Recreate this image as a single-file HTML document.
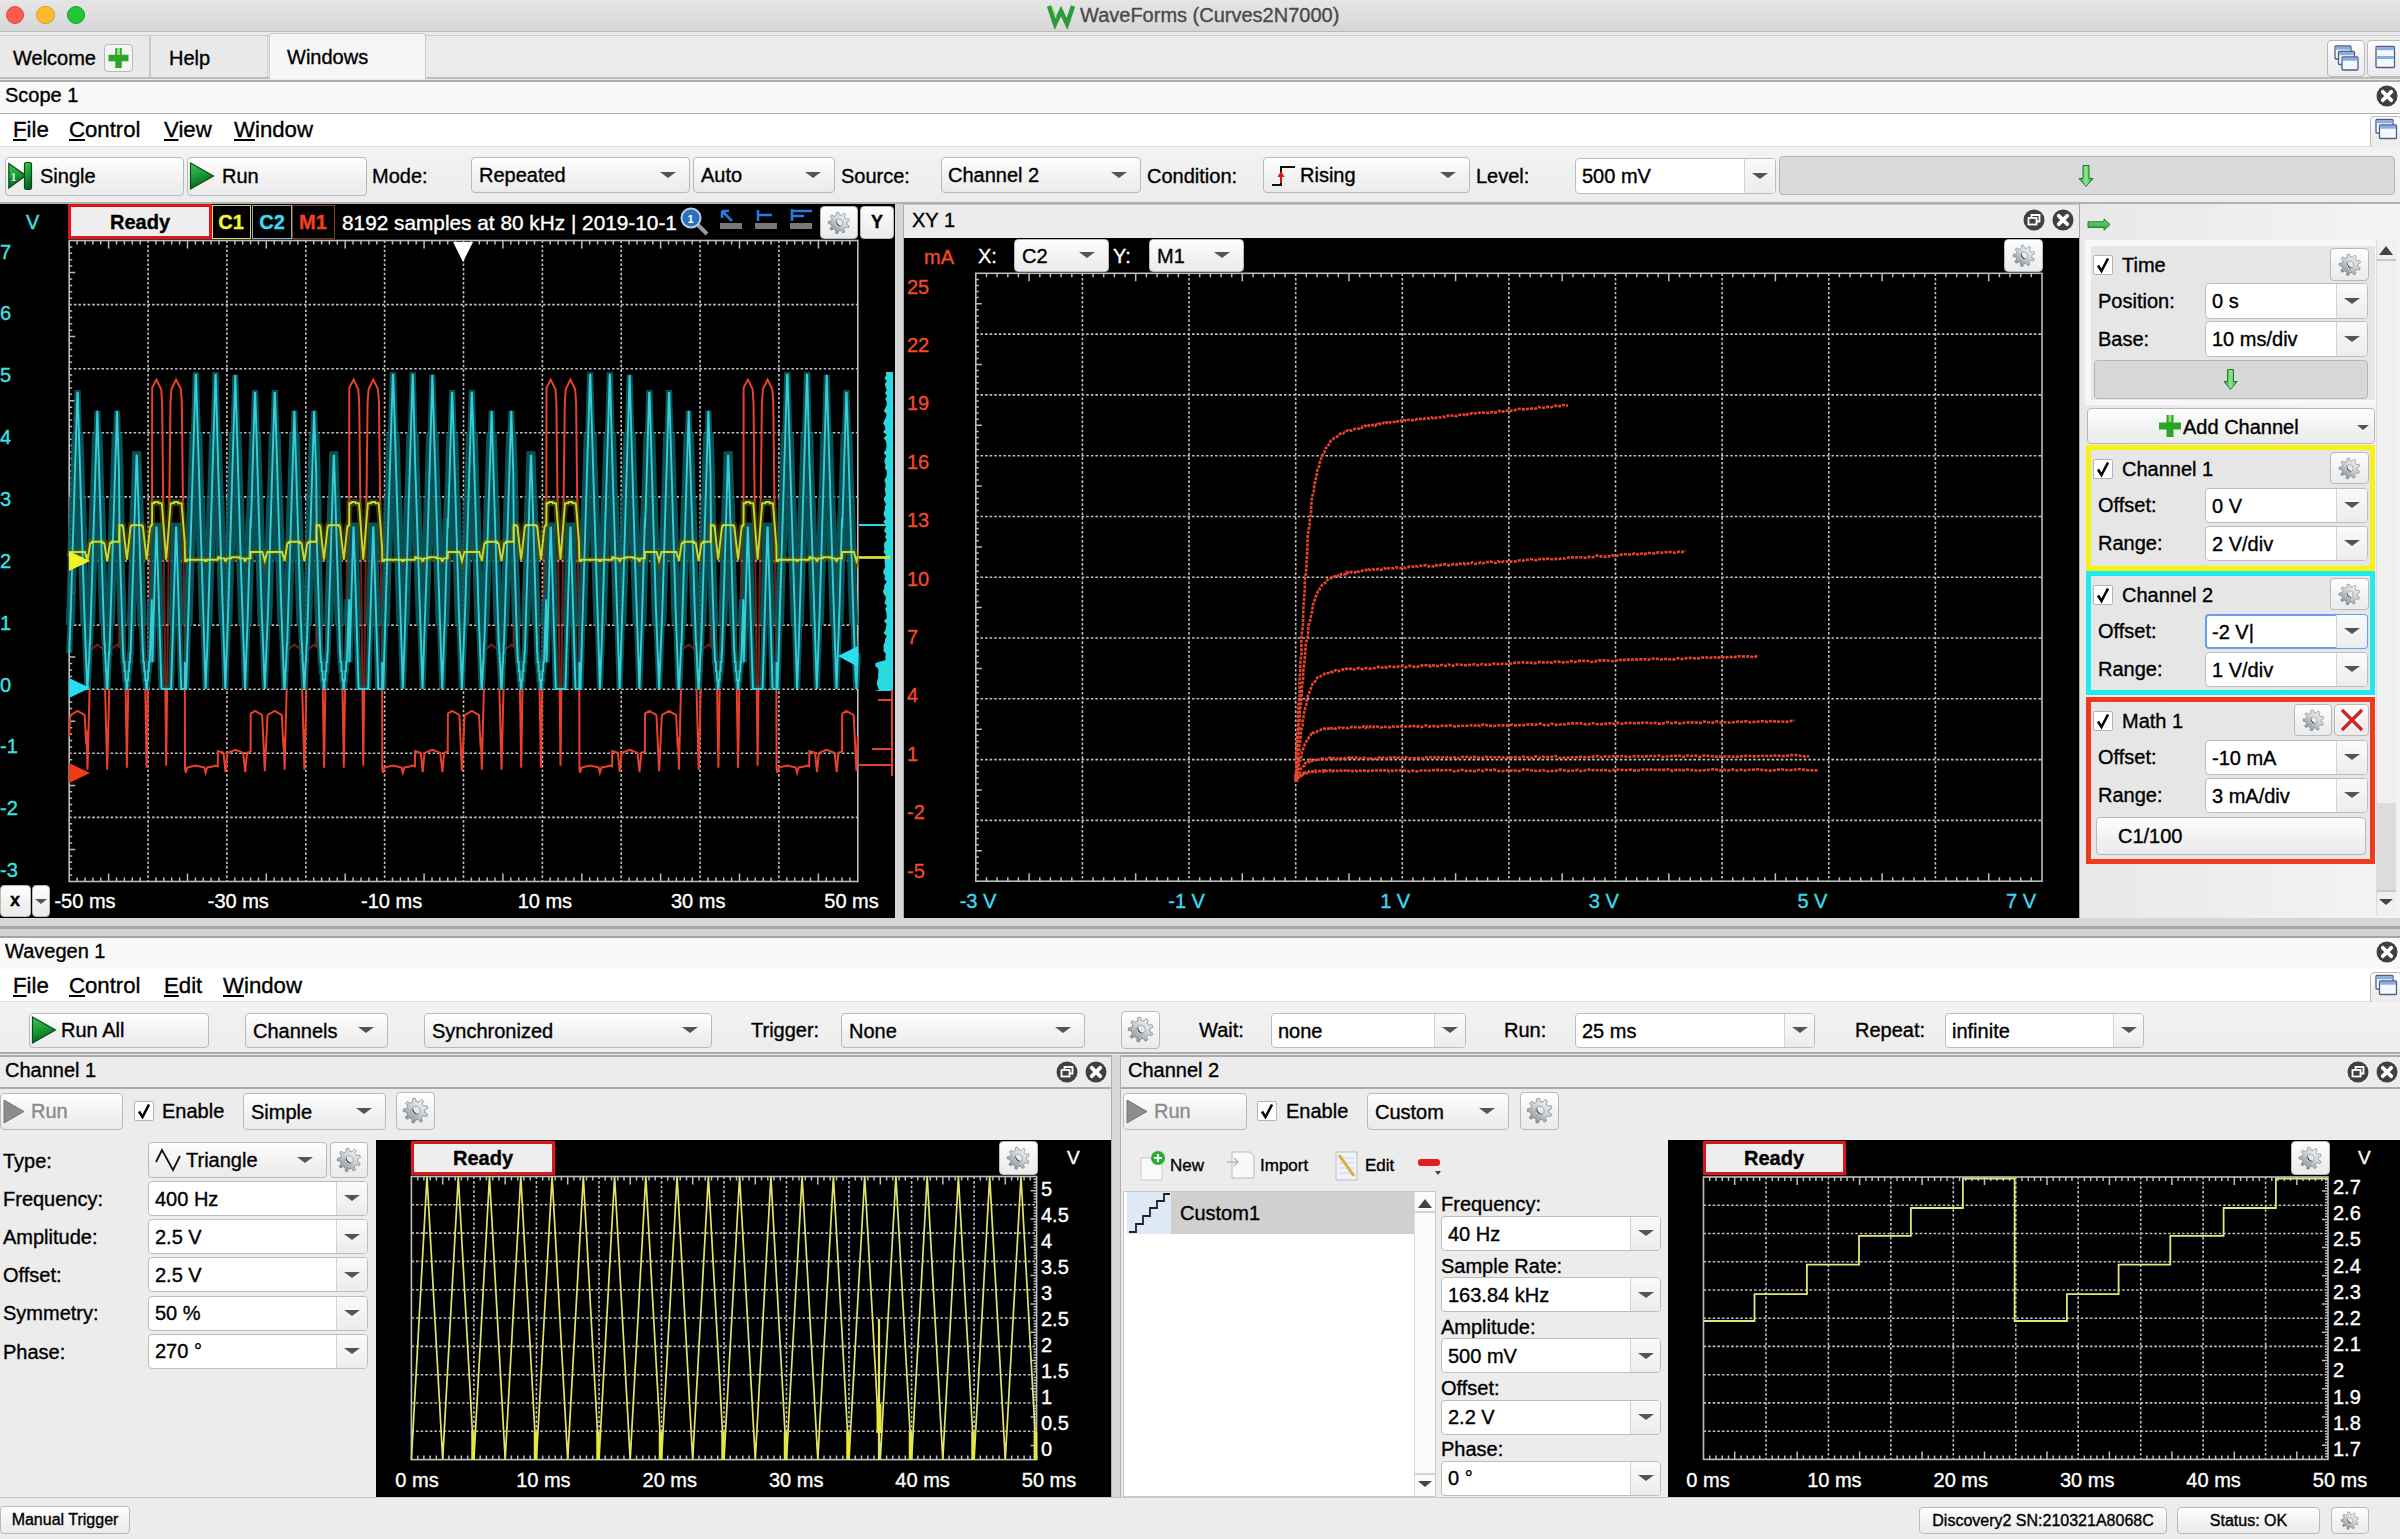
<!DOCTYPE html><html><head><meta charset="utf-8"><style>
*{margin:0;padding:0;box-sizing:border-box}
html,body{width:2400px;height:1539px;overflow:hidden;background:#ececec;font-family:"Liberation Sans", sans-serif}
div,svg{position:absolute}
.t{white-space:nowrap;-webkit-text-stroke:0.35px currentColor}
.btn{background:linear-gradient(#fefefe,#f1f1f1 60%,#ebebeb);border:1.5px solid #b9b9b9;border-radius:4px}
.edit{background:#fff;border:1.5px solid #bdbdbd;border-radius:4px}
.edit.focus{border:2px solid #6a9ee6}
.editbtn{background:linear-gradient(#fafafa,#ececec);border-left:1px solid #d4d4d4;border-radius:0 3px 3px 0}
.ar{width:0;height:0}
.chk{background:#fff;border:1.5px solid #b5b5b5;border-radius:2px}
.ic{overflow:visible}
</style></head><body><svg style="position:absolute;width:0;height:0"><defs><linearGradient id="gg" x1="0.8" y1="0.1" x2="0.2" y2="0.9"><stop offset="0" stop-color="#f2f5f7"/><stop offset="0.5" stop-color="#c9ced2"/><stop offset="1" stop-color="#8a9196"/></linearGradient><symbol id="gear" viewBox="0 0 32 32"><path d="M26.58 18.15 L29.92 20.06 L28.77 22.87 L25.05 21.89 L22.73 24.45 L24.05 28.06 L21.37 29.47 L19.15 26.33 L15.72 26.80 L14.42 30.41 L11.46 29.77 L11.77 25.94 L8.85 24.09 L5.52 26.03 L3.67 23.63 L6.37 20.89 L5.32 17.60 L1.53 16.95 L1.65 13.92 L5.48 13.56 L6.79 10.36 L4.31 7.42 L6.35 5.18 L9.51 7.37 L12.57 5.76 L12.56 1.91 L15.56 1.51 L16.58 5.22 L19.95 5.95 L22.42 3.00 L24.98 4.61 L23.37 8.11 L25.49 10.84 L29.27 10.16 L30.20 13.05 L26.72 14.69Z" fill="url(#gg)" stroke="#7a8085" stroke-width="0.9"/><circle cx="16" cy="16" r="5.2" fill="#e6eaec" stroke="#8a9094" stroke-width="0.8"/><path d="M13.2 12.2 A5 5 0 0 0 19.5 19.6 A6.2 6.2 0 0 1 13.2 12.2Z" fill="#2e3a42"/></symbol></defs></svg><div class="" style="left:0px;top:0px;width:2400px;height:32px;background:linear-gradient(#e6e6e6,#d6d6d6);border-bottom:1px solid #b8b8b8"></div>
<div style="left:5.7px;top:5.7px;width:18.6px;height:18.6px;border-radius:50%;background:#fe5a52;border:1px solid #d94a43"></div>
<div style="left:36.3px;top:5.7px;width:18.6px;height:18.6px;border-radius:50%;background:#fdbb2d;border:1px solid #d9a02a"></div>
<div style="left:66.9px;top:5.7px;width:18.6px;height:18.6px;border-radius:50%;background:#20c934;border:1px solid #189a28"></div>
<div class="t" style="left:1080px;top:3.0px;font-size:20px;line-height:24.0px;color:#4a4a4a;font-weight:normal;">WaveForms (Curves2N7000)</div>
<svg class="ic" style="left:1048px;top:4px" width="26" height="22" viewBox="0 0 26 22"><path d="M1 2 L7 20 L13 7 L19 20 L25 2" fill="none" stroke="#2e9a3c" stroke-width="4.5" stroke-linejoin="miter"/><path d="M4 2 L8 14" stroke="#9fe07a" stroke-width="1.5"/></svg>
<div class="" style="left:0px;top:32px;width:2400px;height:49px;background:#ebebeb"></div>
<div class="" style="left:0px;top:35px;width:2400px;height:1px;background:#c9c9c9"></div>
<div class="" style="left:0px;top:77px;width:2400px;height:2px;background:#bdbdbd"></div>
<div class="" style="left:0px;top:36px;width:151px;height:41px;background:#e9e9e9;border-right:2px solid #c8c8c8"></div>
<div class="t" style="left:13px;top:46.0px;font-size:20px;line-height:24.0px;color:#000;font-weight:normal;">Welcome</div>
<div class="" style="left:104px;top:44px;width:29px;height:28px;background:#f4f4f4;border:1.5px solid #b8b8b8;border-radius:4px"></div>
<svg class="ic" style="left:107px;top:46px" width="23" height="24" viewBox="0 0 23 24"><path d="M11.5 2 V22 M1.5 12 H21.5" stroke="#2aa52a" stroke-width="6.5"/><path d="M11.5 2 V9" stroke="#8fe07f" stroke-width="3"/></svg>
<div class="" style="left:153px;top:36px;width:115px;height:41px;background:#e9e9e9;border-right:1.5px solid #cfcfcf"></div>
<div class="t" style="left:169px;top:46.0px;font-size:20px;line-height:24.0px;color:#000;font-weight:normal;">Help</div>
<div class="" style="left:269px;top:33px;width:157px;height:46px;background:#f6f6f6;border:1.5px solid #cacaca;border-bottom:none;border-radius:3px 3px 0 0"></div>
<div class="t" style="left:287px;top:45.0px;font-size:20px;line-height:24.0px;color:#000;font-weight:normal;">Windows</div>
<div class="btn" style="left:2327px;top:40px;width:38px;height:37px;"></div>
<svg class="ic" style="left:0;top:0" width="2400" height="74" viewBox="0 0 2400 74"><rect x="2335.0" y="46.0" width="16.0" height="13.0" rx="1" fill="#f2f8ff" stroke="#4f5f7c" stroke-width="1.3"/><rect x="2335.7" y="46.7" width="14.6" height="3" fill="#86ade6"/><rect x="2338.5" y="51.5" width="16.0" height="13.0" rx="1" fill="#f2f8ff" stroke="#4f5f7c" stroke-width="1.3"/><rect x="2339.2" y="52.2" width="14.6" height="3" fill="#86ade6"/><rect x="2342.0" y="57.0" width="16.0" height="13.0" rx="1" fill="#f2f8ff" stroke="#4f5f7c" stroke-width="1.3"/><rect x="2342.7" y="57.7" width="14.6" height="3" fill="#86ade6"/></svg>
<div class="btn" style="left:2367px;top:40px;width:36px;height:37px;"></div>
<svg class="ic" style="left:0;top:0" width="2400" height="80" viewBox="0 0 2400 80"><rect x="2376" y="46.5" width="18.5" height="21" rx="1" fill="#f2f8ff" stroke="#4f5f7c" stroke-width="1.3"/><rect x="2376.7" y="47.2" width="17.1" height="3" fill="#86ade6"/><rect x="2376.7" y="56" width="17.1" height="3" fill="#86ade6"/></svg>
<div class="" style="left:0px;top:80px;width:2400px;height:34px;background:#f9f9f9;border-top:2px solid #acacac;border-bottom:1.5px solid #b0b0b0"></div>
<div class="t" style="left:5px;top:83.0px;font-size:20px;line-height:24.0px;color:#000;font-weight:normal;">Scope 1</div>
<svg class="ic" style="left:2376px;top:85px" width="22" height="22" viewBox="0 0 22 22"><circle cx="11" cy="11" r="10.5" fill="#404040"/><path d="M6.8 6.8 L15.2 15.2 M15.2 6.8 L6.8 15.2" stroke="#fff" stroke-width="3.8" stroke-linecap="round"/></svg>
<div class="" style="left:0px;top:114px;width:2400px;height:33px;background:#fff;border-bottom:1px solid #dedede"></div>
<div class="t" style="left:13px;top:116.7px;font-size:22.2px;line-height:26.6px;color:#000;font-weight:normal;"><u>F</u>ile</div>
<div class="t" style="left:69px;top:116.7px;font-size:22.2px;line-height:26.6px;color:#000;font-weight:normal;"><u>C</u>ontrol</div>
<div class="t" style="left:164px;top:116.7px;font-size:22.2px;line-height:26.6px;color:#000;font-weight:normal;"><u>V</u>iew</div>
<div class="t" style="left:234px;top:116.7px;font-size:22.2px;line-height:26.6px;color:#000;font-weight:normal;"><u>W</u>indow</div>
<div class="btn" style="left:2370px;top:116px;width:32px;height:33px;"></div>
<svg class="ic" style="left:0;top:0" width="2400" height="142" viewBox="0 0 2400 142"><rect x="2376.0" y="119.5" width="17.0" height="13.5" rx="1" fill="#f2f8ff" stroke="#4f5f7c" stroke-width="1.3"/><rect x="2376.7" y="120.2" width="15.6" height="3" fill="#86ade6"/><rect x="2379.5" y="125.0" width="17.0" height="13.5" rx="1" fill="#f2f8ff" stroke="#4f5f7c" stroke-width="1.3"/><rect x="2380.2" y="125.7" width="15.6" height="3" fill="#86ade6"/></svg>
<div class="" style="left:0px;top:147px;width:2400px;height:57px;background:linear-gradient(#f3f3f3,#ececec);border-bottom:2px solid #b0b0b0"></div>
<div class="btn" style="left:5px;top:157px;width:179px;height:39px;"></div>
<svg class="ic" style="left:8px;top:161px" width="26" height="30" viewBox="0 0 26 30"><defs><linearGradient id="grn" x1="0" y1="0" x2="0.3" y2="1"><stop offset="0" stop-color="#3cc85a"/><stop offset="0.55" stop-color="#1a9a36"/><stop offset="1" stop-color="#0c5e20"/></linearGradient></defs><path d="M0.8 2.5 L18 14.5 L0.8 27 Z" fill="url(#grn)" stroke="#0a4a18" stroke-width="1.2"/><rect x="16.5" y="1.5" width="7" height="27" rx="1.8" fill="url(#grn)" stroke="#0a4a18" stroke-width="1.2"/><text x="2.5" y="20" font-size="12" font-weight="bold" fill="#d8f0d8" font-family="Liberation Serif">1</text></svg>
<div class="t" style="left:40px;top:164.0px;font-size:20px;line-height:24.0px;color:#000;font-weight:normal;">Single</div>
<div class="btn" style="left:187px;top:157px;width:180px;height:39px;"></div>
<svg class="ic" style="left:189px;top:162px" width="27" height="28" viewBox="0 0 27 28"><path d="M1.5 1 L24.5 14 L1.5 27 Z" fill="url(#grn)" stroke="#0a4a18" stroke-width="1.2"/></svg>
<div class="t" style="left:222px;top:164.0px;font-size:20px;line-height:24.0px;color:#000;font-weight:normal;">Run</div>
<div class="t" style="left:372px;top:164.0px;font-size:20px;line-height:24.0px;color:#000;font-weight:normal;">Mode:</div>
<div class="btn" style="left:471px;top:157px;width:219px;height:36px;"></div>
<div class="t" style="left:479px;top:163.0px;font-size:20px;line-height:24.0px;color:#000;font-weight:normal;">Repeated</div>
<div class="ar" style="left:660px;top:171.8px;border-left:8px solid transparent;border-right:8px solid transparent;border-top:6.8px solid #555"></div>
<div class="btn" style="left:693px;top:157px;width:142px;height:36px;"></div>
<div class="t" style="left:701px;top:163.0px;font-size:20px;line-height:24.0px;color:#000;font-weight:normal;">Auto</div>
<div class="ar" style="left:805px;top:171.8px;border-left:8px solid transparent;border-right:8px solid transparent;border-top:6.8px solid #555"></div>
<div class="t" style="left:841px;top:164.0px;font-size:20px;line-height:24.0px;color:#000;font-weight:normal;">Source:</div>
<div class="btn" style="left:941px;top:157px;width:200px;height:36px;"></div>
<div class="t" style="left:948px;top:163.0px;font-size:20px;line-height:24.0px;color:#000;font-weight:normal;">Channel 2</div>
<div class="ar" style="left:1111px;top:171.8px;border-left:8px solid transparent;border-right:8px solid transparent;border-top:6.8px solid #555"></div>
<div class="t" style="left:1147px;top:164.0px;font-size:20px;line-height:24.0px;color:#000;font-weight:normal;">Condition:</div>
<div class="btn" style="left:1263px;top:157px;width:207px;height:36px;"></div>
<div class="t" style="left:1300px;top:163.0px;font-size:20px;line-height:24.0px;color:#000;font-weight:normal;">Rising</div>
<div class="ar" style="left:1440px;top:171.8px;border-left:8px solid transparent;border-right:8px solid transparent;border-top:6.8px solid #555"></div>
<svg class="ic" style="left:1271px;top:163px" width="26" height="26" viewBox="0 0 26 26"><path d="M1 22 H10 V4 H24" fill="none" stroke="#111" stroke-width="2"/><path d="M10 8 L6.5 14 H13.5 Z" fill="#e01010"/><path d="M10 12 V20" stroke="#e01010" stroke-width="2"/></svg>
<div class="t" style="left:1476px;top:164.0px;font-size:20px;line-height:24.0px;color:#000;font-weight:normal;">Level:</div>
<div class="edit" style="left:1575px;top:158px;width:201px;height:36px;"></div>
<div class="editbtn" style="left:1744px;top:159px;width:31px;height:34px;"></div>
<div class="t" style="left:1582px;top:164.0px;font-size:20px;line-height:24.0px;color:#000;font-weight:normal;">500 mV</div>
<div class="ar" style="left:1752.0px;top:172.8px;border-left:8px solid transparent;border-right:8px solid transparent;border-top:6.8px solid #555"></div>
<div class="" style="left:1779px;top:156px;width:616px;height:39px;background:#dadada;border:1.5px solid #b4b4b4;border-radius:4px"></div>
<svg class="ic" style="left:0;top:0" width="2400" height="240" viewBox="0 0 2400 240"><path d="M2083 165.5 H2089 V178.5 H2093 L2086 186.5 L2079 178.5 H2083 Z" fill="url(#gar2)" stroke="#1c7a2a" stroke-width="1"/><defs><linearGradient id="gar2" x1="0" y1="0" x2="1" y2="0"><stop offset="0" stop-color="#2a9a3a"/><stop offset="0.5" stop-color="#8fe88f"/><stop offset="1" stop-color="#2a9a3a"/></linearGradient></defs></svg>
<div class="" style="left:0px;top:204px;width:895px;height:714px;background:#000"></div>
<div class="t" style="left:26px;top:210.0px;font-size:20px;line-height:24.0px;color:#3fe0e0;font-weight:normal;">V</div>
<div class="" style="left:68px;top:204px;width:144px;height:35px;background:#eeeeee;border:3px solid #e0141a"></div>
<div class="t" style="left:-60.0px;width:400px;text-align:center;top:210.0px;font-size:20px;line-height:24.0px;color:#000;font-weight:bold">Ready</div>
<div class="" style="left:212px;top:205px;width:39px;height:34px;background:#000;border:1px solid #d8d870"></div>
<div class="t" style="left:31.0px;width:400px;text-align:center;top:210.0px;font-size:20px;line-height:24.0px;color:#f4f43a;font-weight:bold">C1</div>
<div class="" style="left:252px;top:205px;width:40px;height:34px;background:#000;border:1px solid #9ab"></div>
<div class="t" style="left:72.0px;width:400px;text-align:center;top:210.0px;font-size:20px;line-height:24.0px;color:#40d8f0;font-weight:bold">C2</div>
<div class="" style="left:292px;top:205px;width:43px;height:34px;background:#000;border:1px solid #7a3a2a"></div>
<div class="t" style="left:113.0px;width:400px;text-align:center;top:210.0px;font-size:20px;line-height:24.0px;color:#f04020;font-weight:bold">M1</div>
<div class="t" style="left:342px;top:209.5px;font-size:20.8px;line-height:25.0px;color:#fff;font-weight:normal;">8192 samples at 80 kHz | 2019-10-1</div>
<svg class="ic" style="left:680px;top:207px" width="30" height="30" viewBox="0 0 30 30"><path d="M17 17 L27 27" stroke="#999" stroke-width="4"/><circle cx="11" cy="11" r="9.5" fill="#2a6fc0" stroke="#bcd" stroke-width="2"/><text x="7.5" y="15.5" font-size="11" font-weight="bold" fill="#fff" font-family="Liberation Sans">1</text></svg>
<svg class="ic" style="left:720px;top:209px" width="24" height="22" viewBox="0 0 24 22"><rect x="0" y="14" width="22" height="6" fill="#777"/><path d="M2 2 L12 12 M2 2 L2 9 M2 2 L9 2" stroke="#2a7ae0" stroke-width="2.5"/></svg>
<svg class="ic" style="left:755px;top:209px" width="24" height="22" viewBox="0 0 24 22"><rect x="0" y="14" width="22" height="6" fill="#777"/><path d="M3 1 V12 M3 6 H17" stroke="#2a7ae0" stroke-width="2.5"/></svg>
<svg class="ic" style="left:790px;top:209px" width="24" height="22" viewBox="0 0 24 22"><rect x="0" y="14" width="22" height="6" fill="#777"/><path d="M2 0 V12 M2 2 H22 M2 7 H14" stroke="#2a7ae0" stroke-width="2.5"/></svg>
<div class="btn" style="left:820px;top:206px;width:38px;height:33px;"></div>
<svg class="ic" style="left:827.1px;top:210.6px" width="23.8" height="23.8" viewBox="0 0 32 32"><use href="#gear"/></svg>
<div class="btn" style="left:860px;top:206px;width:34px;height:33px;"></div>
<div class="t" style="left:677.0px;width:400px;text-align:center;top:212.2px;font-size:18px;line-height:21.6px;color:#000;font-weight:bold">Y</div>
<svg style="left:0;top:0" width="900" height="920" viewBox="0 0 900 920"><path d="M148.1 240.5V881.5M226.9 240.5V881.5M305.8 240.5V881.5M384.6 240.5V881.5M463.5 240.5V881.5M542.4 240.5V881.5M621.2 240.5V881.5M700.1 240.5V881.5M778.9 240.5V881.5M69.2 304.6H857.8M69.2 368.7H857.8M69.2 432.8H857.8M69.2 496.9H857.8M69.2 561.0H857.8M69.2 625.1H857.8M69.2 689.2H857.8M69.2 753.3H857.8M69.2 817.4H857.8" stroke="#bdbdbd" stroke-width="1.6" stroke-dasharray="2.6 2"/><rect x="69.2" y="240.5" width="788.6" height="641.0" fill="none" stroke="#bdbdbd" stroke-width="1.6"/><path d="M77.1 240.5v4M77.1 881.5v-4M85.0 240.5v4M85.0 881.5v-4M92.9 240.5v4M92.9 881.5v-4M100.7 240.5v4M100.7 881.5v-4M108.6 240.5v8M108.6 881.5v-8M116.5 240.5v4M116.5 881.5v-4M124.4 240.5v4M124.4 881.5v-4M132.3 240.5v4M132.3 881.5v-4M140.2 240.5v4M140.2 881.5v-4M155.9 240.5v4M155.9 881.5v-4M163.8 240.5v4M163.8 881.5v-4M171.7 240.5v4M171.7 881.5v-4M179.6 240.5v4M179.6 881.5v-4M187.5 240.5v8M187.5 881.5v-8M195.4 240.5v4M195.4 881.5v-4M203.3 240.5v4M203.3 881.5v-4M211.1 240.5v4M211.1 881.5v-4M219.0 240.5v4M219.0 881.5v-4M234.8 240.5v4M234.8 881.5v-4M242.7 240.5v4M242.7 881.5v-4M250.6 240.5v4M250.6 881.5v-4M258.5 240.5v4M258.5 881.5v-4M266.3 240.5v8M266.3 881.5v-8M274.2 240.5v4M274.2 881.5v-4M282.1 240.5v4M282.1 881.5v-4M290.0 240.5v4M290.0 881.5v-4M297.9 240.5v4M297.9 881.5v-4M313.7 240.5v4M313.7 881.5v-4M321.6 240.5v4M321.6 881.5v-4M329.4 240.5v4M329.4 881.5v-4M337.3 240.5v4M337.3 881.5v-4M345.2 240.5v8M345.2 881.5v-8M353.1 240.5v4M353.1 881.5v-4M361.0 240.5v4M361.0 881.5v-4M368.9 240.5v4M368.9 881.5v-4M376.8 240.5v4M376.8 881.5v-4M392.5 240.5v4M392.5 881.5v-4M400.4 240.5v4M400.4 881.5v-4M408.3 240.5v4M408.3 881.5v-4M416.2 240.5v4M416.2 881.5v-4M424.1 240.5v8M424.1 881.5v-8M432.0 240.5v4M432.0 881.5v-4M439.8 240.5v4M439.8 881.5v-4M447.7 240.5v4M447.7 881.5v-4M455.6 240.5v4M455.6 881.5v-4M471.4 240.5v4M471.4 881.5v-4M479.3 240.5v4M479.3 881.5v-4M487.2 240.5v4M487.2 881.5v-4M495.0 240.5v4M495.0 881.5v-4M502.9 240.5v8M502.9 881.5v-8M510.8 240.5v4M510.8 881.5v-4M518.7 240.5v4M518.7 881.5v-4M526.6 240.5v4M526.6 881.5v-4M534.5 240.5v4M534.5 881.5v-4M550.2 240.5v4M550.2 881.5v-4M558.1 240.5v4M558.1 881.5v-4M566.0 240.5v4M566.0 881.5v-4M573.9 240.5v4M573.9 881.5v-4M581.8 240.5v8M581.8 881.5v-8M589.7 240.5v4M589.7 881.5v-4M597.6 240.5v4M597.6 881.5v-4M605.4 240.5v4M605.4 881.5v-4M613.3 240.5v4M613.3 881.5v-4M629.1 240.5v4M629.1 881.5v-4M637.0 240.5v4M637.0 881.5v-4M644.9 240.5v4M644.9 881.5v-4M652.8 240.5v4M652.8 881.5v-4M660.6 240.5v8M660.6 881.5v-8M668.5 240.5v4M668.5 881.5v-4M676.4 240.5v4M676.4 881.5v-4M684.3 240.5v4M684.3 881.5v-4M692.2 240.5v4M692.2 881.5v-4M708.0 240.5v4M708.0 881.5v-4M715.9 240.5v4M715.9 881.5v-4M723.7 240.5v4M723.7 881.5v-4M731.6 240.5v4M731.6 881.5v-4M739.5 240.5v8M739.5 881.5v-8M747.4 240.5v4M747.4 881.5v-4M755.3 240.5v4M755.3 881.5v-4M763.2 240.5v4M763.2 881.5v-4M771.1 240.5v4M771.1 881.5v-4M786.8 240.5v4M786.8 881.5v-4M794.7 240.5v4M794.7 881.5v-4M802.6 240.5v4M802.6 881.5v-4M810.5 240.5v4M810.5 881.5v-4M818.4 240.5v8M818.4 881.5v-8M826.3 240.5v4M826.3 881.5v-4M834.1 240.5v4M834.1 881.5v-4M842.0 240.5v4M842.0 881.5v-4M849.9 240.5v4M849.9 881.5v-4M69.2 246.9h3M69.2 253.3h3M69.2 259.7h3M69.2 266.1h3M69.2 272.6h6M69.2 279.0h3M69.2 285.4h3M69.2 291.8h3M69.2 298.2h3M69.2 311.0h3M69.2 317.4h3M69.2 323.8h3M69.2 330.2h3M69.2 336.6h6M69.2 343.1h3M69.2 349.5h3M69.2 355.9h3M69.2 362.3h3M69.2 375.1h3M69.2 381.5h3M69.2 387.9h3M69.2 394.3h3M69.2 400.8h6M69.2 407.2h3M69.2 413.6h3M69.2 420.0h3M69.2 426.4h3M69.2 439.2h3M69.2 445.6h3M69.2 452.0h3M69.2 458.4h3M69.2 464.9h6M69.2 471.3h3M69.2 477.7h3M69.2 484.1h3M69.2 490.5h3M69.2 503.3h3M69.2 509.7h3M69.2 516.1h3M69.2 522.5h3M69.2 529.0h6M69.2 535.4h3M69.2 541.8h3M69.2 548.2h3M69.2 554.6h3M69.2 567.4h3M69.2 573.8h3M69.2 580.2h3M69.2 586.6h3M69.2 593.0h6M69.2 599.5h3M69.2 605.9h3M69.2 612.3h3M69.2 618.7h3M69.2 631.5h3M69.2 637.9h3M69.2 644.3h3M69.2 650.7h3M69.2 657.1h6M69.2 663.6h3M69.2 670.0h3M69.2 676.4h3M69.2 682.8h3M69.2 695.6h3M69.2 702.0h3M69.2 708.4h3M69.2 714.8h3M69.2 721.2h6M69.2 727.7h3M69.2 734.1h3M69.2 740.5h3M69.2 746.9h3M69.2 759.7h3M69.2 766.1h3M69.2 772.5h3M69.2 778.9h3M69.2 785.4h6M69.2 791.8h3M69.2 798.2h3M69.2 804.6h3M69.2 811.0h3M69.2 823.8h3M69.2 830.2h3M69.2 836.6h3M69.2 843.0h3M69.2 849.5h6M69.2 855.9h3M69.2 862.3h3M69.2 868.7h3M69.2 875.1h3" stroke="#bdbdbd" stroke-width="1.5"/><defs><clipPath id="cb0"><rect x="0" y="624.9" width="900" height="64.1"/></clipPath><clipPath id="cb1"><rect x="0" y="560.8" width="900" height="64.1"/></clipPath><clipPath id="cb2"><rect x="0" y="496.7" width="900" height="64.1"/></clipPath><clipPath id="cb3"><rect x="0" y="432.6" width="900" height="64.1"/></clipPath><clipPath id="cb4"><rect x="0" y="112.1" width="900" height="320.5"/></clipPath><path id="cyp" d="M69.2 653.1 L70.9 608.2 L76.8 410.8 L77.4 392.9 L77.7 392.9 L84.2 608.2 L87.2 689.0 L87.7 689.0 L87.8 680.0 L88.1 680.0 L88.8 662.1 L89.1 662.1 L89.7 644.1 L90.0 644.1 L97.3 410.8 L103.3 608.2 L104.5 644.1 L104.8 644.1 L105.0 653.1 L105.3 653.1 L105.5 662.1 L105.8 662.1 L105.9 671.1 L106.3 671.1 L106.9 689.0 L107.4 689.0 L108.9 653.1 L109.3 653.1 L109.4 644.1 L109.7 644.1 L117.0 410.8 L119.0 473.6 L119.5 536.4 L122.8 644.1 L123.6 662.1 L124.4 662.1 L124.6 671.1 L125.3 671.1 L125.5 680.0 L126.3 680.0 L126.5 689.0 L127.2 689.0 L127.4 680.0 L128.2 680.0 L128.3 671.1 L129.1 671.1 L129.3 662.1 L130.1 662.1 L130.2 653.1 L130.6 653.1 L136.5 455.7 L136.9 455.7 L137.5 473.6 L142.9 653.1 L143.2 653.1 L143.3 662.1 L144.1 662.1 L144.3 671.1 L145.1 671.1 L145.2 680.0 L146.0 680.0 L146.2 689.0 L147.0 689.0 L147.1 680.0 L147.9 680.0 L148.1 671.1 L148.8 671.1 L149.0 662.1 L149.8 662.1 L151.8 599.3 L152.3 662.1 L156.3 527.5 L156.6 527.5 L161.5 689.0 L171.1 689.0 L176.0 527.5 L176.3 527.5 L181.2 689.0 L184.8 689.0 L185.0 662.1 L186.1 689.0 L195.7 374.9 L196.0 374.9 L205.6 689.0 L207.4 644.1 L215.4 374.9 L215.7 374.9 L218.1 464.6 L225.3 689.0 L228.0 617.2 L235.3 374.9 L241.1 572.3 L245.1 689.0 L247.7 617.2 L250.6 518.5 L250.7 527.5 L251.7 500.5 L254.8 392.9 L255.2 392.9 L255.8 410.8 L261.6 608.2 L264.8 689.0 L268.1 608.2 L274.6 392.9 L274.9 392.9 L275.5 410.8 L281.3 608.2 L284.3 689.0 L284.8 689.0 L285.0 680.0 L285.3 680.0 L285.4 671.1 L285.7 671.1 L286.9 644.1 L287.2 644.1 L294.4 410.8 L300.4 608.2 L301.7 644.1 L302.0 644.1 L302.2 653.1 L302.5 653.1 L302.6 662.1 L302.9 662.1 L304.0 689.0 L304.5 689.0 L305.6 662.1 L305.9 662.1 L306.6 644.1 L306.9 644.1 L314.1 410.8 L316.2 473.6 L316.7 536.4 L320.0 644.1 L320.8 662.1 L321.6 662.1 L321.7 671.1 L322.5 671.1 L322.7 680.0 L323.4 680.0 L323.6 689.0 L324.4 689.0 L324.5 680.0 L325.3 680.0 L325.5 671.1 L326.3 671.1 L326.4 662.1 L327.2 662.1 L327.4 653.1 L327.7 653.1 L333.7 455.7 L334.0 455.7 L334.6 473.6 L340.0 653.1 L340.3 653.1 L340.5 662.1 L341.3 662.1 L341.4 671.1 L342.2 671.1 L342.4 680.0 L343.2 680.0 L343.3 689.0 L344.1 689.0 L344.3 680.0 L345.1 680.0 L345.2 671.1 L346.0 671.1 L346.2 662.1 L346.9 662.1 L349.0 599.3 L349.5 662.1 L353.4 527.5 L353.7 527.5 L358.6 689.0 L368.2 689.0 L373.1 527.5 L373.4 527.5 L378.3 689.0 L382.1 689.0 L382.3 662.1 L383.2 689.0 L392.8 374.9 L393.2 374.9 L402.8 689.0 L404.5 644.1 L412.6 374.9 L412.9 374.9 L415.2 464.6 L422.5 689.0 L426.6 572.3 L432.4 374.9 L438.3 572.3 L442.2 689.0 L444.9 617.2 L447.7 518.5 L447.9 527.5 L448.8 500.5 L452.0 392.9 L452.3 392.9 L452.9 410.8 L458.8 608.2 L461.9 689.0 L465.2 608.2 L471.7 392.9 L472.0 392.9 L472.6 410.8 L478.5 608.2 L481.5 689.0 L482.0 689.0 L482.1 680.0 L482.4 680.0 L483.1 662.1 L483.4 662.1 L484.0 644.1 L484.3 644.1 L491.6 410.8 L497.6 608.2 L498.8 644.1 L499.1 644.1 L499.3 653.1 L499.6 653.1 L499.8 662.1 L500.1 662.1 L501.2 689.0 L501.7 689.0 L502.8 662.1 L503.1 662.1 L503.2 653.1 L503.6 653.1 L503.7 644.1 L504.0 644.1 L511.3 410.8 L513.3 473.6 L513.8 536.4 L517.1 644.1 L517.9 662.1 L518.7 662.1 L518.9 671.1 L519.6 671.1 L519.8 680.0 L520.6 680.0 L520.8 689.0 L521.5 689.0 L521.7 680.0 L522.5 680.0 L522.6 671.1 L523.4 671.1 L523.6 662.1 L524.4 662.1 L524.5 653.1 L524.9 653.1 L530.8 455.7 L531.2 455.7 L531.8 473.6 L537.2 653.1 L537.5 653.1 L537.6 662.1 L538.4 662.1 L538.6 671.1 L539.4 671.1 L539.5 680.0 L540.3 680.0 L540.5 689.0 L541.3 689.0 L541.4 680.0 L542.2 680.0 L542.4 671.1 L543.1 671.1 L543.3 662.1 L544.1 662.1 L546.1 599.3 L546.6 662.1 L550.6 527.5 L550.9 527.5 L555.8 689.0 L565.4 689.0 L570.3 527.5 L570.6 527.5 L575.5 689.0 L579.3 689.0 L579.4 662.1 L580.4 689.0 L590.0 374.9 L590.3 374.9 L599.9 689.0 L601.7 644.1 L609.7 374.9 L610.0 374.9 L612.4 464.6 L619.6 689.0 L623.7 572.3 L629.6 374.9 L635.4 572.3 L639.4 689.0 L642.0 617.2 L644.9 518.5 L645.0 527.5 L646.0 500.5 L649.1 392.9 L649.5 392.9 L650.1 410.8 L655.9 608.2 L659.1 689.0 L662.4 608.2 L668.9 392.9 L669.2 392.9 L669.8 410.8 L675.6 608.2 L678.6 689.0 L679.1 689.0 L681.2 644.1 L681.5 644.1 L688.7 410.8 L694.7 608.2 L696.0 644.1 L696.3 644.1 L697.9 680.0 L698.2 680.0 L698.3 689.0 L698.8 689.0 L699.0 680.0 L699.3 680.0 L699.4 671.1 L699.8 671.1 L699.9 662.1 L700.2 662.1 L700.4 653.1 L700.7 653.1 L700.9 644.1 L701.2 644.1 L708.4 410.8 L710.5 473.6 L711.0 536.4 L714.3 644.1 L715.1 662.1 L715.9 662.1 L716.0 671.1 L716.8 671.1 L717.0 680.0 L717.7 680.0 L717.9 689.0 L718.7 689.0 L718.8 680.0 L719.6 680.0 L719.8 671.1 L720.6 671.1 L720.7 662.1 L721.5 662.1 L721.7 653.1 L722.0 653.1 L728.0 455.7 L728.3 455.7 L728.9 473.6 L734.3 653.1 L734.6 653.1 L734.8 662.1 L735.6 662.1 L735.7 671.1 L736.5 671.1 L736.7 680.0 L737.5 680.0 L737.6 689.0 L738.4 689.0 L738.6 680.0 L739.4 680.0 L739.5 671.1 L740.3 671.1 L740.5 662.1 L741.2 662.1 L743.3 599.3 L743.8 662.1 L747.7 527.5 L748.0 527.5 L752.9 689.0 L762.5 689.0 L767.4 527.5 L767.7 527.5 L772.6 689.0 L776.4 689.0 L776.6 662.1 L777.5 689.0 L787.1 374.9 L787.5 374.9 L797.1 689.0 L798.8 644.1 L806.9 374.9 L807.2 374.9 L809.5 464.6 L816.8 689.0 L819.5 617.2 L826.7 374.9 L832.6 572.3 L836.5 689.0 L839.2 617.2 L842.0 518.5 L842.2 527.5 L843.1 500.5 L846.3 392.9 L846.6 392.9 L847.2 410.8 L853.1 608.2 L855.7 680.0 L856.1 680.0 L856.4 689.0 L857.8 653.1"/></defs><defs><clipPath id="rclipA"><rect x="0" y="0" width="900" height="505"/><rect x="0" y="689" width="900" height="300"/></clipPath><clipPath id="rclipB"><rect x="0" y="505" width="900" height="184"/></clipPath></defs><defs><path id="rep" d="M69.2 736.5 L70.0 718.7 L70.6 715.0 L77.6 710.9 L84.7 715.2 L86.2 744.1 L86.4 730.3 L87.5 769.7 L90.6 651.5 L91.4 649.4 L97.3 644.6 L102.8 649.1 L103.7 650.7 L104.2 656.0 L107.2 769.7 L110.2 653.1 L111.0 649.6 L117.0 644.6 L119.2 646.7 L119.4 534.5 L121.7 537.2 L122.5 538.8 L123.3 549.1 L126.9 767.8 L130.6 544.6 L131.5 538.0 L136.7 531.3 L141.9 538.0 L142.9 544.6 L146.6 767.8 L150.0 555.8 L150.6 540.4 L151.1 538.3 L152.0 536.8 L152.2 387.8 L156.4 379.6 L161.2 389.2 L162.1 402.9 L166.2 765.7 L170.5 402.9 L171.4 389.2 L176.1 379.6 L180.9 389.2 L181.8 402.9 L184.8 662.9 L185.0 768.6 L185.9 772.7 L187.3 767.6 L195.8 765.5 L204.4 767.6 L205.6 772.7 L207.2 767.5 L211.6 766.8 L215.6 765.5 L217.8 766.3 L217.9 751.1 L223.1 752.7 L223.6 753.3 L225.5 772.1 L227.4 752.9 L235.3 749.9 L243.2 752.9 L245.2 772.1 L247.0 753.3 L247.4 752.7 L250.6 751.8 L250.7 713.6 L255.0 710.9 L261.6 714.7 L262.2 715.7 L264.8 771.1 L267.5 715.7 L268.1 714.7 L274.7 710.9 L281.8 715.2 L283.5 748.0 L283.7 736.9 L284.6 769.7 L287.6 653.1 L288.4 649.6 L294.4 644.6 L300.4 649.6 L301.2 653.1 L304.4 769.7 L307.4 653.1 L308.1 649.6 L314.1 644.6 L316.3 646.7 L316.5 534.5 L318.9 537.2 L319.7 538.8 L320.4 549.1 L324.1 767.8 L327.7 544.6 L328.6 538.0 L333.9 531.3 L339.1 538.0 L340.0 544.6 L343.8 767.8 L347.1 555.8 L347.7 540.4 L348.2 538.3 L349.2 536.8 L349.3 387.8 L353.6 379.6 L358.3 389.2 L359.2 402.9 L363.3 765.7 L367.6 402.9 L368.6 389.2 L373.3 379.6 L378.0 389.2 L379.0 402.9 L382.1 677.6 L382.3 769.2 L383.1 772.7 L384.5 767.6 L393.0 765.5 L401.5 767.6 L402.8 772.7 L404.4 767.5 L408.8 766.8 L412.7 765.5 L414.9 766.3 L415.1 751.1 L420.3 752.7 L420.8 753.3 L422.7 772.1 L424.5 752.9 L432.4 749.9 L440.3 752.9 L442.4 772.1 L444.1 753.3 L444.6 752.7 L447.7 751.8 L447.9 713.6 L452.1 710.9 L458.8 714.7 L459.4 715.7 L461.9 771.1 L464.6 715.7 L465.2 714.7 L471.9 710.9 L479.0 715.2 L480.7 748.0 L480.8 736.9 L481.8 769.7 L484.8 653.1 L485.6 649.6 L491.6 644.6 L497.6 649.6 L498.4 653.1 L501.5 769.7 L504.5 653.1 L505.3 649.6 L511.3 644.6 L513.5 646.7 L513.7 534.5 L516.0 537.2 L516.8 538.8 L517.6 549.1 L521.2 767.8 L524.9 544.6 L525.8 538.0 L531.0 531.3 L536.2 538.0 L537.2 544.6 L540.9 767.8 L544.3 555.8 L544.9 540.4 L545.4 538.3 L546.3 536.8 L546.5 387.8 L550.7 379.6 L555.5 389.2 L556.4 402.9 L560.5 765.7 L564.8 402.9 L565.7 389.2 L570.4 379.6 L575.2 389.2 L576.1 402.9 L579.3 677.6 L579.4 769.2 L580.2 772.7 L581.6 767.6 L590.1 765.5 L598.7 767.6 L599.9 772.7 L601.5 767.5 L605.9 766.8 L609.9 765.5 L612.1 766.3 L612.2 751.1 L617.4 752.7 L617.9 753.3 L619.8 772.1 L621.7 752.9 L629.6 749.9 L637.5 752.9 L639.5 772.1 L641.3 753.3 L641.7 752.7 L644.9 751.8 L645.0 713.6 L649.3 710.9 L655.9 714.7 L656.5 715.7 L659.1 771.1 L661.8 715.7 L662.4 714.7 L669.0 710.9 L676.1 715.2 L677.8 748.0 L678.0 736.9 L678.9 769.7 L681.9 653.1 L682.7 649.6 L688.7 644.6 L694.7 649.6 L695.5 653.1 L698.7 769.7 L701.7 653.1 L702.4 649.6 L708.4 644.6 L710.6 646.7 L710.8 534.5 L713.2 537.2 L714.0 538.8 L714.7 549.1 L718.4 767.8 L722.0 544.6 L722.9 538.0 L728.2 531.3 L733.4 538.0 L734.3 544.6 L738.1 767.8 L741.4 555.8 L742.0 540.4 L742.5 538.3 L743.5 536.8 L743.6 387.8 L747.9 379.6 L752.6 389.2 L753.5 402.9 L757.6 765.7 L761.9 402.9 L762.9 389.2 L767.6 379.6 L772.3 389.2 L773.3 402.9 L776.4 677.6 L776.6 769.2 L777.4 772.7 L778.8 767.6 L787.3 765.5 L795.8 767.6 L797.1 772.7 L798.7 767.5 L803.1 766.8 L807.0 765.5 L809.2 766.3 L809.4 751.1 L814.6 752.7 L815.1 753.3 L817.0 772.1 L818.8 752.9 L826.7 749.9 L834.6 752.9 L836.7 772.1 L838.4 753.3 L838.9 752.7 L842.0 751.8 L842.2 713.6 L846.4 710.9 L853.1 714.7 L853.7 715.7 L856.4 771.1 L857.8 736.5"/></defs><use href="#rep" fill="none" stroke="#e8402a" stroke-width="2" clip-path="url(#rclipA)"/><use href="#rep" fill="none" stroke="#e8402a" stroke-width="2" clip-path="url(#rclipB)" opacity="0.5"/><use href="#cyp" clip-path="url(#cb0)" fill="none" stroke="#0b5a5e" stroke-opacity="0.9" stroke-width="6"/><use href="#cyp" clip-path="url(#cb1)" fill="none" stroke="#0b5a5e" stroke-opacity="0.9" stroke-width="9"/><use href="#cyp" clip-path="url(#cb2)" fill="none" stroke="#0b5a5e" stroke-opacity="0.9" stroke-width="10"/><use href="#cyp" clip-path="url(#cb3)" fill="none" stroke="#0b5a5e" stroke-opacity="0.9" stroke-width="9"/><use href="#cyp" clip-path="url(#cb4)" fill="none" stroke="#0b5a5e" stroke-opacity="0.9" stroke-width="6"/><path d="M69.2 555.9 L70.1 552.0 L85.0 552.0 L86.2 557.2 L86.4 554.6 L87.5 561.0 L90.3 543.1 L91.8 543.1 L91.9 541.8 L102.6 541.8 L102.8 543.1 L104.2 543.1 L104.5 544.3 L107.2 561.0 L110.0 543.1 L111.5 543.1 L111.6 541.8 L119.2 541.8 L119.4 525.1 L122.2 525.1 L122.4 526.4 L123.1 526.4 L126.9 559.7 L130.6 526.4 L131.3 526.4 L131.5 525.1 L141.9 525.1 L142.1 526.4 L142.9 526.4 L146.6 559.7 L150.3 526.4 L151.1 526.4 L151.2 525.1 L152.0 525.1 L152.2 503.3 L154.4 503.3 L154.5 502.0 L158.3 502.0 L158.5 503.3 L161.6 503.3 L161.9 504.6 L166.2 559.7 L170.6 504.6 L170.9 503.3 L174.1 503.3 L174.2 502.0 L178.0 502.0 L178.2 503.3 L181.3 503.3 L181.7 504.6 L184.7 541.8 L185.1 561.0 L186.9 561.0 L187.0 559.7 L204.7 559.7 L204.8 561.0 L206.6 561.0 L206.7 559.7 L217.8 559.7 L217.9 557.2 L219.3 557.2 L219.5 558.4 L224.2 558.4 L225.2 561.0 L225.7 561.0 L225.8 559.7 L226.4 559.7 L226.6 558.4 L231.3 558.4 L231.5 557.2 L239.1 557.2 L239.2 558.4 L244.0 558.4 L244.1 559.7 L244.7 559.7 L244.9 561.0 L245.4 561.0 L246.3 558.4 L250.6 558.4 L250.7 552.0 L262.4 552.0 L264.8 561.0 L267.3 552.0 L282.1 552.0 L283.4 557.2 L283.7 555.9 L284.6 561.0 L287.2 544.3 L287.5 543.1 L288.9 543.1 L289.1 541.8 L299.8 541.8 L299.9 543.1 L301.4 543.1 L304.4 561.0 L307.2 543.1 L308.6 543.1 L308.8 541.8 L316.3 541.8 L316.5 525.1 L319.3 525.1 L319.5 526.4 L320.3 526.4 L323.9 559.7 L327.7 526.4 L328.5 526.4 L328.6 525.1 L339.1 525.1 L339.2 526.4 L340.0 526.4 L343.8 559.7 L347.4 526.4 L348.2 526.4 L348.4 525.1 L349.2 525.1 L349.3 503.3 L351.5 503.3 L351.7 502.0 L355.5 502.0 L355.6 503.3 L358.8 503.3 L359.1 504.6 L363.3 559.7 L367.8 504.6 L368.1 503.3 L371.2 503.3 L371.4 502.0 L375.2 502.0 L375.3 503.3 L378.5 503.3 L378.8 504.6 L382.1 546.9 L382.3 561.0 L384.0 561.0 L384.2 559.7 L401.8 559.7 L402.0 561.0 L403.7 561.0 L403.9 559.7 L414.9 559.7 L415.1 557.2 L416.5 557.2 L416.7 558.4 L421.4 558.4 L422.3 561.0 L422.8 561.0 L423.0 559.7 L423.6 559.7 L423.8 558.4 L428.5 558.4 L428.6 557.2 L436.2 557.2 L436.4 558.4 L441.1 558.4 L441.3 559.7 L441.9 559.7 L442.1 561.0 L442.5 561.0 L443.5 558.4 L447.7 558.4 L447.9 552.0 L459.6 552.0 L461.9 561.0 L464.4 552.0 L479.3 552.0 L480.5 557.2 L480.8 555.9 L481.8 561.0 L484.3 544.3 L484.6 543.1 L486.1 543.1 L486.2 541.8 L496.9 541.8 L497.1 543.1 L498.5 543.1 L501.5 561.0 L504.3 543.1 L505.8 543.1 L505.9 541.8 L513.5 541.8 L513.7 525.1 L516.5 525.1 L516.7 526.4 L517.4 526.4 L521.1 559.7 L524.9 526.4 L525.6 526.4 L525.8 525.1 L536.2 525.1 L536.4 526.4 L537.2 526.4 L540.9 559.7 L544.6 526.4 L545.4 526.4 L545.5 525.1 L546.3 525.1 L546.5 503.3 L548.7 503.3 L548.8 502.0 L552.6 502.0 L552.8 503.3 L555.9 503.3 L556.2 504.6 L560.5 559.7 L564.9 504.6 L565.2 503.3 L568.4 503.3 L568.5 502.0 L572.3 502.0 L572.5 503.3 L575.6 503.3 L576.0 504.6 L579.0 541.8 L579.4 561.0 L581.2 561.0 L581.3 559.7 L599.0 559.7 L599.1 561.0 L600.9 561.0 L601.0 559.7 L612.1 559.7 L612.2 557.2 L613.6 557.2 L613.8 558.4 L618.5 558.4 L619.5 561.0 L620.0 561.0 L620.1 559.7 L620.7 559.7 L620.9 558.4 L625.6 558.4 L625.8 557.2 L633.4 557.2 L633.5 558.4 L638.3 558.4 L638.4 559.7 L639.0 559.7 L639.2 561.0 L639.7 561.0 L640.6 558.4 L644.9 558.4 L645.0 552.0 L656.7 552.0 L659.1 561.0 L661.6 552.0 L676.4 552.0 L677.7 557.2 L678.0 555.9 L678.9 561.0 L681.5 544.3 L681.8 543.1 L683.2 543.1 L683.4 541.8 L694.1 541.8 L694.2 543.1 L695.7 543.1 L698.7 561.0 L701.5 543.1 L702.9 543.1 L703.1 541.8 L710.6 541.8 L710.8 525.1 L713.6 525.1 L713.8 526.4 L714.6 526.4 L718.2 559.7 L722.0 526.4 L722.8 526.4 L722.9 525.1 L733.4 525.1 L733.5 526.4 L734.3 526.4 L738.1 559.7 L741.7 526.4 L742.5 526.4 L742.7 525.1 L743.5 525.1 L743.6 503.3 L745.8 503.3 L746.0 502.0 L749.8 502.0 L749.9 503.3 L753.1 503.3 L753.4 504.6 L757.6 559.7 L762.1 504.6 L762.4 503.3 L765.5 503.3 L765.7 502.0 L769.5 502.0 L769.6 503.3 L772.8 503.3 L773.1 504.6 L776.4 546.9 L776.6 561.0 L778.3 561.0 L778.5 559.7 L796.1 559.7 L796.3 561.0 L798.0 561.0 L798.2 559.7 L809.2 559.7 L809.4 557.2 L810.8 557.2 L811.0 558.4 L815.7 558.4 L816.6 561.0 L817.1 561.0 L817.3 559.7 L817.9 559.7 L818.1 558.4 L822.8 558.4 L822.9 557.2 L830.5 557.2 L830.7 558.4 L835.4 558.4 L835.6 559.7 L836.2 559.7 L836.4 561.0 L836.8 561.0 L837.8 558.4 L842.0 558.4 L842.2 552.0 L853.9 552.0 L856.4 561.0 L857.8 555.9" fill="none" stroke="#5e5000" stroke-width="6" stroke-opacity="0.6"/><use href="#cyp" fill="none" stroke="#36cdd6" stroke-width="1.9"/><path d="M69.2 555.9 L70.1 552.0 L85.0 552.0 L86.2 557.2 L86.4 554.6 L87.5 561.0 L90.3 543.1 L91.8 543.1 L91.9 541.8 L102.6 541.8 L102.8 543.1 L104.2 543.1 L104.5 544.3 L107.2 561.0 L110.0 543.1 L111.5 543.1 L111.6 541.8 L119.2 541.8 L119.4 525.1 L122.2 525.1 L122.4 526.4 L123.1 526.4 L126.9 559.7 L130.6 526.4 L131.3 526.4 L131.5 525.1 L141.9 525.1 L142.1 526.4 L142.9 526.4 L146.6 559.7 L150.3 526.4 L151.1 526.4 L151.2 525.1 L152.0 525.1 L152.2 503.3 L154.4 503.3 L154.5 502.0 L158.3 502.0 L158.5 503.3 L161.6 503.3 L161.9 504.6 L166.2 559.7 L170.6 504.6 L170.9 503.3 L174.1 503.3 L174.2 502.0 L178.0 502.0 L178.2 503.3 L181.3 503.3 L181.7 504.6 L184.7 541.8 L185.1 561.0 L186.9 561.0 L187.0 559.7 L204.7 559.7 L204.8 561.0 L206.6 561.0 L206.7 559.7 L217.8 559.7 L217.9 557.2 L219.3 557.2 L219.5 558.4 L224.2 558.4 L225.2 561.0 L225.7 561.0 L225.8 559.7 L226.4 559.7 L226.6 558.4 L231.3 558.4 L231.5 557.2 L239.1 557.2 L239.2 558.4 L244.0 558.4 L244.1 559.7 L244.7 559.7 L244.9 561.0 L245.4 561.0 L246.3 558.4 L250.6 558.4 L250.7 552.0 L262.4 552.0 L264.8 561.0 L267.3 552.0 L282.1 552.0 L283.4 557.2 L283.7 555.9 L284.6 561.0 L287.2 544.3 L287.5 543.1 L288.9 543.1 L289.1 541.8 L299.8 541.8 L299.9 543.1 L301.4 543.1 L304.4 561.0 L307.2 543.1 L308.6 543.1 L308.8 541.8 L316.3 541.8 L316.5 525.1 L319.3 525.1 L319.5 526.4 L320.3 526.4 L323.9 559.7 L327.7 526.4 L328.5 526.4 L328.6 525.1 L339.1 525.1 L339.2 526.4 L340.0 526.4 L343.8 559.7 L347.4 526.4 L348.2 526.4 L348.4 525.1 L349.2 525.1 L349.3 503.3 L351.5 503.3 L351.7 502.0 L355.5 502.0 L355.6 503.3 L358.8 503.3 L359.1 504.6 L363.3 559.7 L367.8 504.6 L368.1 503.3 L371.2 503.3 L371.4 502.0 L375.2 502.0 L375.3 503.3 L378.5 503.3 L378.8 504.6 L382.1 546.9 L382.3 561.0 L384.0 561.0 L384.2 559.7 L401.8 559.7 L402.0 561.0 L403.7 561.0 L403.9 559.7 L414.9 559.7 L415.1 557.2 L416.5 557.2 L416.7 558.4 L421.4 558.4 L422.3 561.0 L422.8 561.0 L423.0 559.7 L423.6 559.7 L423.8 558.4 L428.5 558.4 L428.6 557.2 L436.2 557.2 L436.4 558.4 L441.1 558.4 L441.3 559.7 L441.9 559.7 L442.1 561.0 L442.5 561.0 L443.5 558.4 L447.7 558.4 L447.9 552.0 L459.6 552.0 L461.9 561.0 L464.4 552.0 L479.3 552.0 L480.5 557.2 L480.8 555.9 L481.8 561.0 L484.3 544.3 L484.6 543.1 L486.1 543.1 L486.2 541.8 L496.9 541.8 L497.1 543.1 L498.5 543.1 L501.5 561.0 L504.3 543.1 L505.8 543.1 L505.9 541.8 L513.5 541.8 L513.7 525.1 L516.5 525.1 L516.7 526.4 L517.4 526.4 L521.1 559.7 L524.9 526.4 L525.6 526.4 L525.8 525.1 L536.2 525.1 L536.4 526.4 L537.2 526.4 L540.9 559.7 L544.6 526.4 L545.4 526.4 L545.5 525.1 L546.3 525.1 L546.5 503.3 L548.7 503.3 L548.8 502.0 L552.6 502.0 L552.8 503.3 L555.9 503.3 L556.2 504.6 L560.5 559.7 L564.9 504.6 L565.2 503.3 L568.4 503.3 L568.5 502.0 L572.3 502.0 L572.5 503.3 L575.6 503.3 L576.0 504.6 L579.0 541.8 L579.4 561.0 L581.2 561.0 L581.3 559.7 L599.0 559.7 L599.1 561.0 L600.9 561.0 L601.0 559.7 L612.1 559.7 L612.2 557.2 L613.6 557.2 L613.8 558.4 L618.5 558.4 L619.5 561.0 L620.0 561.0 L620.1 559.7 L620.7 559.7 L620.9 558.4 L625.6 558.4 L625.8 557.2 L633.4 557.2 L633.5 558.4 L638.3 558.4 L638.4 559.7 L639.0 559.7 L639.2 561.0 L639.7 561.0 L640.6 558.4 L644.9 558.4 L645.0 552.0 L656.7 552.0 L659.1 561.0 L661.6 552.0 L676.4 552.0 L677.7 557.2 L678.0 555.9 L678.9 561.0 L681.5 544.3 L681.8 543.1 L683.2 543.1 L683.4 541.8 L694.1 541.8 L694.2 543.1 L695.7 543.1 L698.7 561.0 L701.5 543.1 L702.9 543.1 L703.1 541.8 L710.6 541.8 L710.8 525.1 L713.6 525.1 L713.8 526.4 L714.6 526.4 L718.2 559.7 L722.0 526.4 L722.8 526.4 L722.9 525.1 L733.4 525.1 L733.5 526.4 L734.3 526.4 L738.1 559.7 L741.7 526.4 L742.5 526.4 L742.7 525.1 L743.5 525.1 L743.6 503.3 L745.8 503.3 L746.0 502.0 L749.8 502.0 L749.9 503.3 L753.1 503.3 L753.4 504.6 L757.6 559.7 L762.1 504.6 L762.4 503.3 L765.5 503.3 L765.7 502.0 L769.5 502.0 L769.6 503.3 L772.8 503.3 L773.1 504.6 L776.4 546.9 L776.6 561.0 L778.3 561.0 L778.5 559.7 L796.1 559.7 L796.3 561.0 L798.0 561.0 L798.2 559.7 L809.2 559.7 L809.4 557.2 L810.8 557.2 L811.0 558.4 L815.7 558.4 L816.6 561.0 L817.1 561.0 L817.3 559.7 L817.9 559.7 L818.1 558.4 L822.8 558.4 L822.9 557.2 L830.5 557.2 L830.7 558.4 L835.4 558.4 L835.6 559.7 L836.2 559.7 L836.4 561.0 L836.8 561.0 L837.8 558.4 L842.0 558.4 L842.2 552.0 L853.9 552.0 L856.4 561.0 L857.8 555.9" fill="none" stroke="#c8f040" stroke-opacity="0.9" stroke-width="1.9"/><path d="M69 551 L90 561 L69 571 Z" fill="#f2f22a"/><path d="M69 678 L90 688 L69 698 Z" fill="#2ae0f0"/><path d="M69 763 L90 773 L69 783 Z" fill="#f03a1a"/><path d="M858 646 L838 656 L858 667 Z" fill="#2ae0f0"/><path d="M453 242 L473 242 L463 262 Z" fill="#fff"/><path d="M893 372 L885.7 372 L886.4 375 L884.4 378 L886.7 381 L884.9 384 L885.5 387 L886.8 390 L885.0 393 L886.9 396 L885.3 399 L886.7 402 L886.6 405 L885.3 408 L883.7 411 L886.5 414 L886.1 417 L884.5 420 L883.2 423 L884.7 426 L885.4 429 L883.1 432 L886.8 435 L883.6 438 L885.8 441 L886.4 444 L886.5 447 L885.8 450 L883.7 453 L886.3 456 L884.7 459 L884.4 462 L885.5 465 L884.8 468 L886.7 471 L886.8 474 L886.2 477 L884.3 480 L885.3 483 L885.7 486 L884.7 489 L885.2 492 L885.8 495 L883.8 498 L884.2 501 L886.0 504 L884.7 507 L884.9 510 L883.5 513 L884.1 516 L885.8 519 L883.1 522 L886.5 525 L885.3 528 L884.0 531 L886.4 534 L885.0 537 L886.8 540 L884.3 543 L883.9 546 L884.7 549 L883.5 552 L885.7 555 L884.2 558 L884.6 561 L884.7 564 L885.2 567 L883.6 570 L883.2 573 L885.1 576 L884.3 579 L886.8 582 L884.2 585 L884.4 588 L883.0 591 L883.7 594 L885.9 597 L885.5 600 L884.3 603 L886.9 606 L885.2 609 L886.3 612 L886.5 615 L886.8 618 L883.9 621 L886.5 624 L886.0 627 L885.4 630 L883.5 633 L886.7 636 L885.2 639 L884.8 642 L883.5 645 L883.7 648 L883.5 651 L885.9 654 L885.3 657 L885.6 660 L875.5 663 L875.2 666 L878.4 669 L878.3 672 L878.1 675 L878.1 678 L877.1 681 L876.6 684 L877.9 687 L879.0 690 L874 691 L893 691 Z" fill="#2ad8e0"/><path d="M859 525 H887 M859 557.5 H887" stroke="#2ad8e0" stroke-width="2"/><path d="M859 557.5 H890" stroke="#e8e020" stroke-width="2.5"/><path d="M892 690 V776 M859 765 H892 M878 700 H892 M872 749 H892" stroke="#e8402a" stroke-width="2"/></svg>
<div class="t" style="left:0px;top:239.5px;font-size:20px;line-height:24.0px;color:#3fe0e0;font-weight:normal;">7</div>
<div class="t" style="left:0px;top:301.4px;font-size:20px;line-height:24.0px;color:#3fe0e0;font-weight:normal;">6</div>
<div class="t" style="left:0px;top:363.2px;font-size:20px;line-height:24.0px;color:#3fe0e0;font-weight:normal;">5</div>
<div class="t" style="left:0px;top:425.1px;font-size:20px;line-height:24.0px;color:#3fe0e0;font-weight:normal;">4</div>
<div class="t" style="left:0px;top:486.9px;font-size:20px;line-height:24.0px;color:#3fe0e0;font-weight:normal;">3</div>
<div class="t" style="left:0px;top:548.8px;font-size:20px;line-height:24.0px;color:#3fe0e0;font-weight:normal;">2</div>
<div class="t" style="left:0px;top:610.6px;font-size:20px;line-height:24.0px;color:#3fe0e0;font-weight:normal;">1</div>
<div class="t" style="left:0px;top:672.5px;font-size:20px;line-height:24.0px;color:#3fe0e0;font-weight:normal;">0</div>
<div class="t" style="left:0px;top:734.3px;font-size:20px;line-height:24.0px;color:#3fe0e0;font-weight:normal;">-1</div>
<div class="t" style="left:0px;top:796.1px;font-size:20px;line-height:24.0px;color:#3fe0e0;font-weight:normal;">-2</div>
<div class="t" style="left:0px;top:858.0px;font-size:20px;line-height:24.0px;color:#3fe0e0;font-weight:normal;">-3</div>
<div class="t" style="left:-115.0px;width:400px;text-align:center;top:889.0px;font-size:20px;line-height:24.0px;color:#fff;font-weight:normal">-50 ms</div>
<div class="t" style="left:38.30000000000001px;width:400px;text-align:center;top:889.0px;font-size:20px;line-height:24.0px;color:#fff;font-weight:normal">-30 ms</div>
<div class="t" style="left:191.60000000000002px;width:400px;text-align:center;top:889.0px;font-size:20px;line-height:24.0px;color:#fff;font-weight:normal">-10 ms</div>
<div class="t" style="left:344.9000000000001px;width:400px;text-align:center;top:889.0px;font-size:20px;line-height:24.0px;color:#fff;font-weight:normal">10 ms</div>
<div class="t" style="left:498.20000000000005px;width:400px;text-align:center;top:889.0px;font-size:20px;line-height:24.0px;color:#fff;font-weight:normal">30 ms</div>
<div class="t" style="left:651.5px;width:400px;text-align:center;top:889.0px;font-size:20px;line-height:24.0px;color:#fff;font-weight:normal">50 ms</div>
<div class="btn" style="left:0px;top:885px;width:31px;height:32px;"></div>
<div class="t" style="left:-185.0px;width:400px;text-align:center;top:890.2px;font-size:18px;line-height:21.6px;color:#000;font-weight:bold">x</div>
<div class="btn" style="left:32px;top:885px;width:18px;height:32px;"></div>
<div class="ar" style="left:35px;top:898.6px;border-left:6px solid transparent;border-right:6px solid transparent;border-top:5.1px solid #555"></div>
<div class="" style="left:895px;top:204px;width:9px;height:714px;background:#d6d6d6;border-right:1.5px solid #aaa"></div>
<div class="" style="left:904px;top:204px;width:1175px;height:34px;background:#ececec;border-top:1px solid #c8c8c8"></div>
<div class="t" style="left:912px;top:208.0px;font-size:20px;line-height:24.0px;color:#000;font-weight:normal;">XY 1</div>
<svg class="ic" style="left:2023px;top:209px" width="22" height="22" viewBox="0 0 22 22"><circle cx="11" cy="11" r="10.5" fill="#404040"/><rect x="5.5" y="9" width="8" height="6.5" fill="none" stroke="#fff" stroke-width="1.8"/><path d="M8.5 9 V6 H16.5 V12.5 H13.5" fill="none" stroke="#fff" stroke-width="1.8"/></svg>
<svg class="ic" style="left:2052px;top:209px" width="22" height="22" viewBox="0 0 22 22"><circle cx="11" cy="11" r="10.5" fill="#404040"/><path d="M6.8 6.8 L15.2 15.2 M15.2 6.8 L6.8 15.2" stroke="#fff" stroke-width="3.8" stroke-linecap="round"/></svg>
<div class="" style="left:904px;top:238px;width:1175px;height:680px;background:#000"></div>
<div class="t" style="left:924px;top:245.0px;font-size:20px;line-height:24.0px;color:#f04a2a;font-weight:normal;">mA</div>
<div class="t" style="left:978px;top:244.0px;font-size:20px;line-height:24.0px;color:#fff;font-weight:normal;">X:</div>
<div class="btn" style="left:1014px;top:239px;width:95px;height:33px;"></div>
<div class="t" style="left:1022px;top:243.5px;font-size:20px;line-height:24.0px;color:#000;font-weight:normal;">C2</div>
<div class="ar" style="left:1079px;top:252.3px;border-left:8px solid transparent;border-right:8px solid transparent;border-top:6.8px solid #555"></div>
<div class="t" style="left:1113px;top:244.0px;font-size:20px;line-height:24.0px;color:#fff;font-weight:normal;">Y:</div>
<div class="btn" style="left:1149px;top:239px;width:95px;height:33px;"></div>
<div class="t" style="left:1157px;top:243.5px;font-size:20px;line-height:24.0px;color:#000;font-weight:normal;">M1</div>
<div class="ar" style="left:1214px;top:252.3px;border-left:8px solid transparent;border-right:8px solid transparent;border-top:6.8px solid #555"></div>
<div class="btn" style="left:2004px;top:239px;width:39px;height:33px;"></div>
<svg class="ic" style="left:2011.6px;top:243.6px" width="23.8" height="23.8" viewBox="0 0 32 32"><use href="#gear"/></svg>
<svg style="left:0;top:0" width="2080" height="920" viewBox="0 0 2080 920"><path d="M1082.4 273.3V881.2M1189.0 273.3V881.2M1295.7 273.3V881.2M1402.3 273.3V881.2M1508.9 273.3V881.2M1615.5 273.3V881.2M1722.1 273.3V881.2M1828.8 273.3V881.2M1935.4 273.3V881.2M975.8 334.1H2042M975.8 394.9H2042M975.8 455.7H2042M975.8 516.5H2042M975.8 577.2H2042M975.8 638.0H2042M975.8 698.8H2042M975.8 759.6H2042M975.8 820.4H2042" stroke="#bdbdbd" stroke-width="1.6" stroke-dasharray="2.6 2"/><rect x="975.8" y="273.3" width="1066.2" height="607.9" fill="none" stroke="#bdbdbd" stroke-width="1.6"/><path d="M986.5 273.3v4M986.5 881.2v-4M997.1 273.3v4M997.1 881.2v-4M1007.8 273.3v4M1007.8 881.2v-4M1018.4 273.3v4M1018.4 881.2v-4M1029.1 273.3v8M1029.1 881.2v-8M1039.8 273.3v4M1039.8 881.2v-4M1050.4 273.3v4M1050.4 881.2v-4M1061.1 273.3v4M1061.1 881.2v-4M1071.8 273.3v4M1071.8 881.2v-4M1093.1 273.3v4M1093.1 881.2v-4M1103.7 273.3v4M1103.7 881.2v-4M1114.4 273.3v4M1114.4 881.2v-4M1125.1 273.3v4M1125.1 881.2v-4M1135.7 273.3v8M1135.7 881.2v-8M1146.4 273.3v4M1146.4 881.2v-4M1157.1 273.3v4M1157.1 881.2v-4M1167.7 273.3v4M1167.7 881.2v-4M1178.4 273.3v4M1178.4 881.2v-4M1199.7 273.3v4M1199.7 881.2v-4M1210.4 273.3v4M1210.4 881.2v-4M1221.0 273.3v4M1221.0 881.2v-4M1231.7 273.3v4M1231.7 881.2v-4M1242.3 273.3v8M1242.3 881.2v-8M1253.0 273.3v4M1253.0 881.2v-4M1263.7 273.3v4M1263.7 881.2v-4M1274.3 273.3v4M1274.3 881.2v-4M1285.0 273.3v4M1285.0 881.2v-4M1306.3 273.3v4M1306.3 881.2v-4M1317.0 273.3v4M1317.0 881.2v-4M1327.6 273.3v4M1327.6 881.2v-4M1338.3 273.3v4M1338.3 881.2v-4M1349.0 273.3v8M1349.0 881.2v-8M1359.6 273.3v4M1359.6 881.2v-4M1370.3 273.3v4M1370.3 881.2v-4M1381.0 273.3v4M1381.0 881.2v-4M1391.6 273.3v4M1391.6 881.2v-4M1412.9 273.3v4M1412.9 881.2v-4M1423.6 273.3v4M1423.6 881.2v-4M1434.3 273.3v4M1434.3 881.2v-4M1444.9 273.3v4M1444.9 881.2v-4M1455.6 273.3v8M1455.6 881.2v-8M1466.3 273.3v4M1466.3 881.2v-4M1476.9 273.3v4M1476.9 881.2v-4M1487.6 273.3v4M1487.6 881.2v-4M1498.2 273.3v4M1498.2 881.2v-4M1519.6 273.3v4M1519.6 881.2v-4M1530.2 273.3v4M1530.2 881.2v-4M1540.9 273.3v4M1540.9 881.2v-4M1551.5 273.3v4M1551.5 881.2v-4M1562.2 273.3v8M1562.2 881.2v-8M1572.9 273.3v4M1572.9 881.2v-4M1583.5 273.3v4M1583.5 881.2v-4M1594.2 273.3v4M1594.2 881.2v-4M1604.9 273.3v4M1604.9 881.2v-4M1626.2 273.3v4M1626.2 881.2v-4M1636.8 273.3v4M1636.8 881.2v-4M1647.5 273.3v4M1647.5 881.2v-4M1658.2 273.3v4M1658.2 881.2v-4M1668.8 273.3v8M1668.8 881.2v-8M1679.5 273.3v4M1679.5 881.2v-4M1690.2 273.3v4M1690.2 881.2v-4M1700.8 273.3v4M1700.8 881.2v-4M1711.5 273.3v4M1711.5 881.2v-4M1732.8 273.3v4M1732.8 881.2v-4M1743.5 273.3v4M1743.5 881.2v-4M1754.1 273.3v4M1754.1 881.2v-4M1764.8 273.3v4M1764.8 881.2v-4M1775.4 273.3v8M1775.4 881.2v-8M1786.1 273.3v4M1786.1 881.2v-4M1796.8 273.3v4M1796.8 881.2v-4M1807.4 273.3v4M1807.4 881.2v-4M1818.1 273.3v4M1818.1 881.2v-4M1839.4 273.3v4M1839.4 881.2v-4M1850.1 273.3v4M1850.1 881.2v-4M1860.7 273.3v4M1860.7 881.2v-4M1871.4 273.3v4M1871.4 881.2v-4M1882.1 273.3v8M1882.1 881.2v-8M1892.7 273.3v4M1892.7 881.2v-4M1903.4 273.3v4M1903.4 881.2v-4M1914.1 273.3v4M1914.1 881.2v-4M1924.7 273.3v4M1924.7 881.2v-4M1946.0 273.3v4M1946.0 881.2v-4M1956.7 273.3v4M1956.7 881.2v-4M1967.4 273.3v4M1967.4 881.2v-4M1978.0 273.3v4M1978.0 881.2v-4M1988.7 273.3v8M1988.7 881.2v-8M1999.4 273.3v4M1999.4 881.2v-4M2010.0 273.3v4M2010.0 881.2v-4M2020.7 273.3v4M2020.7 881.2v-4M2031.3 273.3v4M2031.3 881.2v-4M975.8 279.4h3M975.8 285.5h3M975.8 291.5h3M975.8 297.6h3M975.8 303.7h6M975.8 309.8h3M975.8 315.9h3M975.8 321.9h3M975.8 328.0h3M975.8 340.2h3M975.8 346.2h3M975.8 352.3h3M975.8 358.4h3M975.8 364.5h6M975.8 370.6h3M975.8 376.6h3M975.8 382.7h3M975.8 388.8h3M975.8 401.0h3M975.8 407.0h3M975.8 413.1h3M975.8 419.2h3M975.8 425.3h6M975.8 431.4h3M975.8 437.4h3M975.8 443.5h3M975.8 449.6h3M975.8 461.7h3M975.8 467.8h3M975.8 473.9h3M975.8 480.0h3M975.8 486.1h6M975.8 492.1h3M975.8 498.2h3M975.8 504.3h3M975.8 510.4h3M975.8 522.5h3M975.8 528.6h3M975.8 534.7h3M975.8 540.8h3M975.8 546.9h6M975.8 552.9h3M975.8 559.0h3M975.8 565.1h3M975.8 571.2h3M975.8 583.3h3M975.8 589.4h3M975.8 595.5h3M975.8 601.6h3M975.8 607.6h6M975.8 613.7h3M975.8 619.8h3M975.8 625.9h3M975.8 632.0h3M975.8 644.1h3M975.8 650.2h3M975.8 656.3h3M975.8 662.4h3M975.8 668.4h6M975.8 674.5h3M975.8 680.6h3M975.8 686.7h3M975.8 692.8h3M975.8 704.9h3M975.8 711.0h3M975.8 717.1h3M975.8 723.1h3M975.8 729.2h6M975.8 735.3h3M975.8 741.4h3M975.8 747.5h3M975.8 753.5h3M975.8 765.7h3M975.8 771.8h3M975.8 777.9h3M975.8 783.9h3M975.8 790.0h6M975.8 796.1h3M975.8 802.2h3M975.8 808.3h3M975.8 814.3h3M975.8 826.5h3M975.8 832.6h3M975.8 838.6h3M975.8 844.7h3M975.8 850.8h6M975.8 856.9h3M975.8 863.0h3M975.8 869.0h3M975.8 875.1h3" stroke="#bdbdbd" stroke-width="1.5"/><path d="M1295.5 779.6 L1295.7 780.2 L1295.9 778.3 L1295.9 776.9 L1295.4 775.0 L1296.2 772.2 L1296.4 768.0 L1296.2 763.8 L1296.6 759.5 L1296.2 755.2 L1296.5 750.4 L1296.6 744.3 L1297.0 738.6 L1297.4 732.2 L1298.2 726.7 L1297.8 719.0 L1298.3 711.9 L1298.4 705.1 L1299.7 696.4 L1299.5 687.5 L1299.5 679.4 L1300.1 671.6 L1300.4 661.2 L1301.6 653.0 L1301.2 643.8 L1301.6 634.5 L1303.0 625.8 L1303.2 615.3 L1303.4 605.9 L1304.3 597.3 L1304.8 587.9 L1304.8 579.9 L1306.1 571.3 L1306.5 562.8 L1307.1 553.5 L1307.4 545.9 L1307.6 537.8 L1308.4 531.0 L1309.5 525.4 L1309.9 518.8 L1311.1 512.7 L1311.2 505.6 L1311.7 500.1 L1312.4 495.8 L1313.8 491.4 L1314.1 486.6 L1315.2 481.4 L1315.8 479.0 L1316.7 475.1 L1317.2 470.7 L1318.3 467.8 L1319.2 466.1 L1319.6 462.4 L1321.0 460.5 L1321.0 457.1 L1321.9 456.4 L1323.4 453.0 L1324.3 452.7 L1325.1 449.8 L1325.9 447.8 L1326.3 447.9 L1327.9 445.7 L1329.1 444.2 L1330.0 443.7 L1330.3 441.6 L1331.4 440.5 L1332.7 439.6 L1333.5 438.4 L1335.0 438.0 L1335.6 437.6 L1337.1 436.6 L1338.2 436.0 L1338.9 435.4 L1339.5 434.6 L1340.7 433.2 L1342.5 432.9 L1343.3 433.4 L1344.5 432.2 L1345.6 432.1 L1347.0 430.8 L1348.0 430.6 L1348.9 431.2 L1350.3 430.4 L1351.7 430.6 L1352.6 429.7 L1353.9 429.2 L1355.4 428.8 L1356.5 428.5 L1358.1 428.6 L1359.3 428.7 L1360.0 427.7 L1362.0 427.9 L1362.5 426.4 L1364.1 426.0 L1365.3 425.7 L1367.0 426.8 L1368.6 425.4 L1369.8 426.0 L1370.6 426.2 L1372.8 424.8 L1374.2 424.9 L1375.2 425.7 L1376.9 424.0 L1378.0 424.4 L1379.3 423.6 L1380.7 424.4 L1381.9 423.9 L1383.8 422.7 L1385.2 423.6 L1386.9 422.4 L1388.9 423.5 L1390.4 422.0 L1391.2 421.7 L1393.3 421.9 L1394.2 422.0 L1396.5 422.6 L1397.4 421.2 L1399.7 421.7 L1401.1 420.7 L1402.0 421.6 L1404.0 420.3 L1406.2 421.1 L1407.7 419.9 L1409.4 419.7 L1411.1 420.2 L1412.2 420.2 L1414.5 419.5 L1415.4 419.8 L1417.2 418.9 L1418.9 418.6 L1420.6 418.9 L1422.5 419.5 L1424.2 418.8 L1425.9 418.4 L1427.5 418.0 L1429.3 418.7 L1431.6 417.5 L1433.3 418.7 L1434.8 418.3 L1436.9 417.5 L1439.1 417.2 L1440.7 417.5 L1443.0 416.7 L1444.7 417.2 L1446.4 416.4 L1448.0 415.6 L1449.7 415.5 L1452.2 415.6 L1453.5 415.1 L1456.2 416.3 L1457.9 415.1 L1459.4 414.9 L1461.6 414.5 L1463.6 414.5 L1466.1 415.6 L1467.7 414.1 L1470.1 414.0 L1471.5 413.2 L1473.5 413.9 L1475.7 413.2 L1477.7 412.7 L1479.5 412.6 L1481.7 412.3 L1483.4 412.6 L1485.7 412.9 L1488.1 413.0 L1490.4 412.8 L1492.7 412.0 L1494.3 412.8 L1496.2 412.2 L1498.9 410.7 L1501.2 412.1 L1503.2 411.6 L1505.5 410.3 L1507.4 410.8 L1509.9 411.1 L1512.1 410.5 L1514.4 410.5 L1516.4 409.4 L1518.0 409.0 L1520.6 408.8 L1523.3 409.4 L1525.4 409.3 L1527.7 408.8 L1529.3 409.2 L1532.4 408.4 L1534.5 408.5 L1536.3 408.4 L1538.8 407.0 L1541.2 408.0 L1543.5 407.8 L1546.6 407.1 L1548.4 406.9 L1551.0 407.2 L1553.3 406.7 L1555.2 405.6 L1557.8 406.5 L1560.3 405.9 L1562.4 404.8 L1565.1 405.7 L1567.9 405.4 M1295.4 779.9 L1295.6 779.4 L1295.3 779.1 L1295.5 777.7 L1296.4 773.9 L1296.1 772.8 L1296.8 769.1 L1296.3 765.3 L1297.2 761.5 L1297.2 757.1 L1297.4 754.0 L1297.3 748.8 L1298.1 743.6 L1298.7 736.8 L1299.3 731.3 L1298.8 724.3 L1299.7 718.6 L1300.0 711.4 L1300.6 704.9 L1301.6 697.4 L1302.0 691.8 L1302.0 685.0 L1303.2 677.9 L1303.3 670.0 L1304.1 664.4 L1304.9 656.6 L1305.4 650.1 L1305.8 643.7 L1307.3 638.3 L1308.1 632.7 L1308.2 628.0 L1308.9 623.0 L1310.5 619.4 L1311.1 614.8 L1312.1 611.6 L1312.6 607.7 L1313.0 604.5 L1314.3 601.6 L1315.4 598.1 L1315.7 596.8 L1316.8 593.8 L1318.0 591.4 L1319.3 590.8 L1319.9 588.6 L1321.0 586.9 L1322.1 584.8 L1323.0 583.7 L1324.8 583.1 L1325.2 582.8 L1327.1 581.0 L1327.4 579.7 L1328.5 579.1 L1329.7 578.2 L1331.1 578.2 L1332.9 577.9 L1333.7 576.7 L1335.1 576.1 L1336.2 575.0 L1337.4 576.2 L1338.6 575.0 L1340.4 575.2 L1341.3 573.8 L1342.7 573.7 L1344.3 574.3 L1346.1 573.9 L1346.7 572.1 L1348.8 573.4 L1350.1 572.6 L1351.1 572.0 L1353.5 572.5 L1354.9 572.6 L1355.8 570.8 L1357.3 571.3 L1359.4 571.9 L1361.0 571.2 L1362.6 570.6 L1364.0 569.7 L1365.9 569.9 L1367.7 570.5 L1368.7 569.4 L1370.3 570.1 L1372.5 569.0 L1373.6 569.6 L1375.8 569.2 L1377.2 569.4 L1378.7 568.8 L1381.0 569.8 L1382.9 569.5 L1384.6 568.2 L1386.2 569.4 L1388.5 568.1 L1389.7 568.3 L1392.2 568.0 L1393.7 568.3 L1396.3 567.4 L1397.3 567.5 L1399.6 567.9 L1401.4 568.0 L1403.9 567.4 L1405.3 568.1 L1407.5 567.7 L1409.4 566.5 L1412.0 566.5 L1414.2 566.7 L1415.5 566.1 L1417.8 566.7 L1420.5 565.7 L1422.0 565.7 L1424.8 565.4 L1426.0 565.1 L1428.5 566.5 L1431.2 566.1 L1433.5 566.3 L1435.0 564.8 L1437.9 565.7 L1439.2 565.4 L1441.8 564.8 L1444.1 564.3 L1446.0 564.4 L1448.7 565.4 L1450.8 565.3 L1453.2 564.1 L1456.2 564.8 L1458.2 563.3 L1460.6 563.7 L1463.4 563.2 L1465.3 564.4 L1467.4 563.4 L1470.6 563.9 L1472.3 562.4 L1474.8 563.9 L1477.5 563.4 L1480.7 562.5 L1482.6 563.5 L1485.5 562.1 L1488.1 562.1 L1490.2 561.4 L1493.3 562.9 L1495.8 562.8 L1497.8 561.3 L1500.9 562.5 L1504.0 561.3 L1506.0 561.3 L1508.9 562.0 L1511.3 561.6 L1514.5 561.5 L1517.3 561.0 L1519.6 560.3 L1522.4 561.0 L1524.9 559.8 L1528.3 559.7 L1530.4 559.2 L1533.7 559.5 L1537.0 560.4 L1539.8 559.1 L1541.8 558.7 L1545.1 559.6 L1547.9 558.6 L1550.8 559.1 L1553.9 559.2 L1557.0 558.9 L1559.3 559.0 L1562.4 558.4 L1565.4 558.5 L1568.3 557.5 L1571.3 557.2 L1575.0 557.8 L1577.4 557.3 L1581.2 557.3 L1583.5 557.7 L1587.0 557.8 L1589.5 556.7 L1593.3 557.2 L1596.5 555.6 L1599.0 555.6 L1602.1 556.9 L1605.6 556.7 L1608.6 556.4 L1611.9 555.1 L1615.4 556.2 L1618.0 555.4 L1621.7 554.5 L1624.7 554.2 L1627.8 554.2 L1631.5 554.8 L1634.4 553.4 L1637.8 554.5 L1641.0 553.6 L1644.3 554.3 L1648.0 552.8 L1650.9 553.2 L1654.8 553.5 L1657.7 552.4 L1661.7 552.7 L1664.7 552.3 L1668.8 552.1 L1671.9 552.0 L1675.2 552.8 L1679.3 551.7 L1681.9 552.1 L1685.5 550.6 M1296.0 779.7 L1296.0 779.4 L1296.1 778.8 L1295.5 776.9 L1296.1 776.6 L1296.6 773.8 L1296.6 772.3 L1296.7 769.5 L1296.8 767.6 L1297.8 763.9 L1297.7 762.0 L1298.6 757.5 L1298.2 755.2 L1299.5 750.6 L1299.0 747.4 L1299.9 743.2 L1300.6 738.9 L1300.7 734.5 L1301.4 729.5 L1302.6 725.9 L1302.6 720.6 L1303.5 716.9 L1304.2 712.2 L1304.8 709.5 L1306.2 704.6 L1306.6 702.5 L1306.9 699.5 L1307.8 696.1 L1309.1 693.5 L1309.7 690.7 L1310.9 688.5 L1311.9 686.5 L1312.6 683.9 L1313.8 683.1 L1314.4 682.2 L1316.0 680.3 L1316.4 679.2 L1317.4 677.5 L1318.8 676.5 L1319.9 676.4 L1320.7 675.9 L1321.9 675.4 L1323.8 674.4 L1324.2 673.8 L1325.8 674.2 L1326.8 673.5 L1328.9 672.9 L1330.0 671.6 L1331.5 671.8 L1332.8 672.2 L1333.4 671.7 L1335.6 670.2 L1336.4 671.2 L1337.6 671.2 L1339.2 670.9 L1340.5 670.1 L1342.8 669.4 L1343.7 669.8 L1345.3 668.8 L1346.7 668.9 L1349.0 669.7 L1350.6 668.6 L1352.1 668.4 L1353.5 669.2 L1355.0 669.5 L1356.8 668.9 L1358.9 667.9 L1360.7 668.8 L1361.9 669.0 L1363.5 669.2 L1365.6 668.0 L1367.6 668.1 L1368.8 668.5 L1370.5 668.6 L1372.6 668.2 L1375.2 668.0 L1376.8 667.4 L1378.1 666.8 L1380.2 667.8 L1382.5 667.5 L1384.9 666.8 L1386.2 667.6 L1388.1 666.4 L1390.5 666.5 L1392.5 666.6 L1394.8 667.2 L1396.6 667.2 L1399.0 666.3 L1401.6 666.4 L1403.0 666.0 L1405.6 667.4 L1408.0 666.4 L1409.7 665.7 L1412.3 666.6 L1414.3 666.7 L1416.7 667.1 L1419.3 665.8 L1421.8 665.4 L1423.7 665.9 L1425.8 665.2 L1428.7 665.1 L1430.9 666.7 L1432.9 665.3 L1435.8 665.7 L1438.3 666.2 L1440.3 665.2 L1443.0 664.7 L1446.1 665.9 L1448.4 664.5 L1451.1 665.7 L1453.3 665.6 L1455.9 664.6 L1458.1 664.5 L1460.7 664.7 L1464.0 665.2 L1466.8 665.2 L1468.9 664.8 L1471.8 665.1 L1474.6 664.1 L1477.5 665.3 L1479.8 665.1 L1482.4 663.9 L1485.4 664.7 L1488.9 664.6 L1491.1 664.7 L1494.0 663.5 L1497.4 664.1 L1500.1 664.1 L1503.3 663.7 L1506.1 664.0 L1509.0 663.4 L1511.8 663.6 L1514.4 662.8 L1517.7 662.5 L1521.0 662.6 L1523.2 662.4 L1527.1 662.7 L1529.4 662.1 L1532.4 663.2 L1536.1 663.1 L1539.3 661.9 L1542.3 662.3 L1545.7 663.0 L1548.9 661.6 L1552.1 663.0 L1555.4 661.5 L1557.9 661.4 L1560.9 662.6 L1565.0 662.1 L1568.3 662.0 L1571.0 661.0 L1574.2 662.1 L1577.6 661.2 L1581.2 660.6 L1584.4 660.9 L1588.2 661.0 L1591.2 662.0 L1594.8 661.7 L1598.4 660.1 L1601.6 660.7 L1605.5 660.4 L1608.9 660.7 L1611.9 661.2 L1615.3 661.0 L1618.9 659.4 L1622.5 660.7 L1626.9 659.2 L1630.0 660.0 L1633.9 659.3 L1637.3 659.5 L1641.2 659.3 L1645.0 659.2 L1648.0 659.8 L1651.9 658.7 L1655.8 658.5 L1659.7 659.5 L1663.4 659.3 L1666.8 658.8 L1670.6 659.5 L1674.1 659.4 L1677.8 658.1 L1681.9 659.2 L1686.0 658.2 L1690.3 657.8 L1693.7 658.2 L1697.9 658.5 L1701.7 657.7 L1705.4 657.2 L1709.8 658.0 L1713.7 657.0 L1717.4 658.0 L1721.5 656.7 L1725.4 657.9 L1729.2 656.6 L1733.4 657.4 L1738.0 656.3 L1741.4 656.3 L1745.7 656.7 L1749.6 656.2 L1753.8 657.3 L1758.5 655.6 M1296.1 779.2 L1295.5 780.6 L1296.0 779.7 L1295.8 778.1 L1296.2 777.2 L1296.0 776.7 L1296.0 775.5 L1297.1 774.7 L1297.1 773.1 L1297.4 770.6 L1298.0 769.3 L1298.5 768.3 L1298.7 765.6 L1299.5 763.3 L1299.5 761.6 L1300.7 759.5 L1301.1 757.3 L1301.7 754.7 L1302.1 751.9 L1302.9 749.3 L1303.4 748.5 L1304.4 746.2 L1304.7 744.0 L1305.7 742.6 L1306.5 741.1 L1307.8 738.8 L1308.4 738.6 L1309.1 736.9 L1310.6 735.0 L1311.1 734.3 L1312.3 734.9 L1313.0 732.7 L1314.1 732.8 L1315.3 732.2 L1316.3 732.2 L1317.3 731.0 L1318.8 730.3 L1319.7 730.3 L1321.0 729.5 L1322.4 729.6 L1322.7 729.2 L1324.3 728.5 L1325.6 729.1 L1327.2 728.8 L1328.1 728.4 L1329.9 729.5 L1331.0 728.1 L1332.7 728.3 L1333.5 727.7 L1335.6 728.8 L1336.9 728.1 L1338.3 727.6 L1340.2 727.7 L1341.4 728.5 L1343.2 727.8 L1344.2 727.9 L1345.7 728.3 L1347.5 728.3 L1349.1 727.4 L1350.8 727.4 L1352.4 726.6 L1354.7 727.1 L1355.9 727.1 L1357.9 727.2 L1359.9 727.6 L1361.4 728.0 L1363.8 726.4 L1365.6 727.9 L1367.4 726.5 L1369.4 727.4 L1370.5 726.2 L1373.4 727.3 L1374.7 726.3 L1376.6 726.5 L1379.2 726.7 L1380.6 727.6 L1383.3 726.3 L1385.5 727.0 L1387.5 727.1 L1389.7 727.3 L1391.8 726.2 L1393.8 726.7 L1396.1 726.5 L1398.4 726.7 L1400.0 726.1 L1402.2 726.5 L1404.4 726.5 L1406.7 726.5 L1409.4 726.5 L1412.1 725.5 L1414.5 726.3 L1416.6 726.6 L1419.2 726.1 L1421.2 727.1 L1423.3 726.5 L1426.4 725.3 L1428.8 726.5 L1431.7 725.8 L1434.2 726.1 L1436.3 726.8 L1438.4 726.4 L1441.6 725.7 L1444.4 725.7 L1446.7 725.9 L1449.6 725.3 L1452.0 725.7 L1454.8 726.4 L1457.2 726.3 L1460.1 725.7 L1462.7 725.7 L1466.2 725.9 L1468.8 725.3 L1471.1 725.2 L1474.2 725.8 L1477.3 724.6 L1480.1 726.1 L1482.8 724.6 L1485.5 724.5 L1488.3 726.1 L1491.7 725.6 L1494.8 726.0 L1497.6 725.4 L1500.7 725.5 L1503.7 725.4 L1506.3 725.4 L1509.6 725.5 L1512.4 724.4 L1515.4 725.4 L1519.4 725.2 L1522.0 725.4 L1525.6 724.9 L1528.3 724.4 L1531.7 724.4 L1534.9 724.9 L1538.7 723.8 L1541.6 723.8 L1544.4 725.1 L1548.2 725.2 L1551.4 723.6 L1554.7 724.6 L1558.6 725.2 L1561.5 724.1 L1564.5 724.5 L1568.1 723.6 L1571.3 723.3 L1575.4 723.4 L1579.2 723.3 L1582.6 723.4 L1585.3 724.4 L1589.0 724.3 L1592.5 723.1 L1596.7 724.2 L1600.4 724.2 L1603.2 724.0 L1607.5 723.6 L1611.3 723.2 L1615.1 724.0 L1617.8 722.7 L1622.1 724.0 L1625.3 723.1 L1629.7 722.8 L1633.6 723.3 L1636.6 723.0 L1640.9 723.1 L1644.8 722.5 L1648.8 722.9 L1652.5 723.3 L1656.1 722.8 L1660.4 723.8 L1664.3 723.0 L1667.7 722.1 L1672.4 723.2 L1676.2 722.4 L1680.0 723.5 L1684.2 722.8 L1687.7 722.4 L1692.3 722.3 L1696.2 722.6 L1700.5 723.0 L1704.0 721.5 L1708.1 722.2 L1712.5 722.8 L1717.0 721.4 L1721.1 722.7 L1725.3 722.2 L1728.9 722.6 L1733.7 722.3 L1738.1 721.6 L1741.5 721.9 L1746.5 721.2 L1750.7 722.5 L1754.5 721.9 L1759.3 721.5 L1763.2 721.1 L1768.1 722.0 L1772.2 720.7 L1777.0 721.9 L1780.8 721.4 L1785.9 721.9 L1790.0 721.1 L1794.6 720.6 M1295.3 779.3 L1295.8 779.6 L1295.8 779.4 L1295.9 778.7 L1295.6 779.8 L1296.1 777.7 L1296.7 778.4 L1296.5 777.4 L1297.0 776.5 L1297.1 774.9 L1298.4 775.5 L1298.4 774.0 L1298.6 773.5 L1299.3 772.8 L1300.2 771.5 L1300.9 769.5 L1300.6 768.4 L1301.4 767.2 L1301.9 767.1 L1303.4 766.0 L1304.2 766.0 L1304.1 764.6 L1305.2 763.1 L1306.5 762.7 L1307.0 762.8 L1308.2 762.3 L1308.6 761.5 L1309.2 762.0 L1311.0 760.3 L1311.0 760.1 L1312.3 761.0 L1313.9 760.6 L1314.1 760.3 L1315.9 759.9 L1317.3 758.7 L1317.5 759.8 L1319.5 759.6 L1320.0 759.3 L1321.7 758.3 L1322.5 758.5 L1323.6 758.8 L1324.9 758.3 L1326.2 759.1 L1327.4 759.1 L1329.0 757.8 L1331.1 758.1 L1332.5 759.2 L1333.9 757.9 L1334.9 757.8 L1336.9 759.1 L1338.1 758.4 L1339.4 759.0 L1341.1 758.6 L1342.3 757.9 L1343.8 758.7 L1346.0 757.7 L1347.9 757.9 L1349.2 757.7 L1350.7 758.9 L1352.5 757.6 L1354.4 757.9 L1356.6 757.5 L1358.5 757.4 L1360.2 758.5 L1361.4 758.1 L1363.3 757.7 L1365.1 757.9 L1367.9 759.0 L1369.7 757.4 L1371.1 758.8 L1372.8 758.5 L1375.0 758.9 L1376.8 758.6 L1379.2 757.4 L1380.9 758.6 L1383.5 757.4 L1385.6 758.7 L1387.5 758.1 L1389.6 757.4 L1392.4 758.3 L1394.0 757.2 L1396.2 758.1 L1398.8 757.5 L1400.8 758.1 L1403.6 758.4 L1405.8 757.3 L1407.6 758.3 L1410.3 758.2 L1412.4 758.4 L1415.1 758.4 L1418.0 757.8 L1419.6 758.5 L1422.6 758.4 L1424.9 757.2 L1427.9 757.5 L1429.8 757.5 L1432.8 756.8 L1435.3 757.6 L1437.9 757.0 L1440.7 758.2 L1443.5 757.3 L1446.0 757.4 L1448.8 756.8 L1451.6 758.4 L1453.9 757.6 L1456.7 757.6 L1459.0 758.4 L1462.0 757.0 L1464.7 757.1 L1468.2 756.7 L1470.4 757.8 L1473.3 756.6 L1476.6 757.6 L1479.5 757.8 L1482.0 758.1 L1485.6 756.6 L1488.0 757.4 L1491.3 757.0 L1494.0 757.2 L1497.0 757.5 L1500.8 756.7 L1503.6 757.7 L1506.3 757.9 L1510.2 757.1 L1512.8 757.9 L1516.1 757.0 L1519.7 757.7 L1522.3 756.7 L1525.5 757.1 L1529.4 757.7 L1532.6 757.7 L1535.9 756.3 L1538.8 757.9 L1542.6 756.6 L1545.4 757.3 L1548.7 757.1 L1551.8 756.9 L1555.6 756.1 L1558.7 757.8 L1562.8 757.7 L1566.1 757.5 L1569.9 757.6 L1572.5 757.2 L1576.3 757.2 L1579.8 756.9 L1584.0 757.1 L1586.9 756.9 L1590.7 757.6 L1594.2 756.4 L1598.2 756.1 L1601.8 757.6 L1605.4 756.3 L1609.1 756.8 L1612.5 756.0 L1616.2 756.3 L1620.3 756.3 L1623.9 755.9 L1628.0 757.2 L1631.9 756.7 L1635.7 756.0 L1639.7 756.5 L1643.4 756.7 L1647.2 756.1 L1650.9 756.0 L1655.1 756.2 L1659.1 755.5 L1662.9 757.0 L1666.7 756.5 L1671.0 756.0 L1675.5 756.0 L1679.4 755.7 L1682.7 756.9 L1687.2 755.5 L1691.2 756.1 L1695.7 755.5 L1699.4 757.0 L1704.0 755.5 L1707.8 755.9 L1712.4 756.3 L1716.8 756.7 L1720.7 756.5 L1725.2 756.5 L1729.2 756.5 L1733.7 756.7 L1737.4 756.6 L1741.6 756.4 L1746.6 755.9 L1751.3 756.0 L1755.2 756.4 L1760.0 756.0 L1764.0 755.7 L1768.5 756.2 L1772.8 755.6 L1777.6 755.5 L1781.8 756.2 L1786.9 755.7 L1791.0 755.1 L1795.4 755.0 L1800.3 755.8 L1804.4 756.4 L1809.2 756.2 M1295.9 780.7 L1295.3 779.7 L1296.1 778.9 L1295.4 779.7 L1296.1 780.2 L1296.6 779.2 L1297.0 778.9 L1296.9 778.9 L1297.1 778.0 L1297.7 777.6 L1298.4 777.8 L1298.4 776.3 L1298.8 776.4 L1299.5 776.3 L1300.3 776.5 L1300.5 775.1 L1301.3 775.7 L1301.6 774.4 L1302.8 773.4 L1303.0 774.4 L1304.2 773.3 L1304.2 773.7 L1305.6 773.3 L1306.7 773.2 L1307.0 771.6 L1307.8 772.1 L1308.9 771.4 L1309.5 772.0 L1310.9 771.4 L1312.3 771.8 L1312.3 771.3 L1314.1 771.1 L1315.1 770.5 L1315.8 771.9 L1317.2 771.6 L1318.0 771.2 L1319.5 770.8 L1320.8 771.2 L1322.4 771.3 L1323.1 770.4 L1324.1 771.5 L1325.3 770.3 L1326.7 771.1 L1328.8 771.2 L1330.1 770.2 L1330.7 771.5 L1332.5 771.4 L1334.0 770.4 L1335.4 770.2 L1337.5 771.1 L1338.5 770.8 L1340.1 770.1 L1342.2 771.1 L1343.9 770.8 L1345.2 770.5 L1346.3 771.7 L1348.8 770.6 L1350.5 771.5 L1351.7 771.1 L1354.1 770.9 L1355.9 770.4 L1357.1 771.2 L1358.8 770.5 L1361.3 770.8 L1363.1 770.4 L1364.4 770.6 L1366.3 771.7 L1368.3 770.9 L1370.1 770.9 L1372.4 770.6 L1374.1 770.1 L1376.9 770.5 L1378.4 770.2 L1380.5 770.3 L1382.4 771.1 L1384.8 770.2 L1387.3 770.0 L1389.1 771.4 L1391.1 770.7 L1394.1 771.3 L1395.6 770.5 L1398.5 770.5 L1401.0 770.2 L1403.3 770.7 L1404.9 770.6 L1407.2 771.1 L1409.7 771.4 L1412.4 770.5 L1414.5 770.9 L1416.9 771.4 L1419.3 770.7 L1422.2 770.3 L1425.0 770.5 L1427.4 770.8 L1429.6 770.5 L1432.0 770.1 L1435.3 770.3 L1437.8 769.9 L1440.3 770.4 L1442.9 770.3 L1445.2 770.3 L1448.0 769.9 L1451.3 770.2 L1453.7 771.3 L1456.9 771.3 L1459.7 769.9 L1462.0 769.7 L1465.2 770.9 L1467.7 770.4 L1470.9 770.9 L1473.4 771.2 L1476.5 770.8 L1479.2 769.9 L1482.9 771.0 L1485.7 769.7 L1488.1 769.9 L1491.2 770.2 L1494.5 769.7 L1497.5 770.8 L1500.4 771.1 L1503.9 770.9 L1506.8 770.4 L1510.3 770.2 L1512.8 771.1 L1516.8 770.1 L1519.3 771.1 L1523.1 769.6 L1526.0 769.7 L1529.8 769.9 L1533.2 770.9 L1535.7 770.8 L1539.4 770.8 L1543.2 770.0 L1545.8 771.2 L1549.6 771.2 L1553.2 770.8 L1556.8 770.6 L1559.9 769.6 L1563.6 770.2 L1567.0 771.1 L1570.1 770.8 L1573.6 770.7 L1577.9 769.9 L1581.2 771.2 L1584.9 770.4 L1588.1 769.5 L1591.9 770.1 L1595.4 769.9 L1599.0 770.6 L1603.3 769.8 L1606.6 770.3 L1610.5 771.0 L1614.2 769.9 L1618.5 769.6 L1622.0 769.9 L1626.1 770.3 L1629.8 769.6 L1633.6 770.4 L1637.3 770.7 L1641.6 769.5 L1644.9 769.9 L1648.8 769.4 L1652.8 769.6 L1657.2 770.0 L1660.7 769.8 L1665.0 769.9 L1668.8 769.3 L1672.7 771.0 L1677.5 769.3 L1681.6 770.9 L1685.5 769.4 L1689.6 769.9 L1693.4 770.1 L1697.4 770.8 L1702.3 770.3 L1706.8 770.3 L1710.3 769.5 L1714.5 769.1 L1719.4 770.6 L1723.2 769.4 L1727.8 770.6 L1732.5 769.4 L1736.7 770.5 L1741.0 769.6 L1744.8 770.5 L1749.4 769.7 L1754.0 769.7 L1758.8 769.4 L1762.4 770.0 L1767.5 770.4 L1772.1 770.6 L1776.8 769.8 L1780.9 769.2 L1785.3 770.0 L1789.7 770.2 L1794.3 769.7 L1799.8 769.1 L1803.5 769.7 L1808.3 770.2 L1812.8 770.4 L1818.3 770.3" fill="none" stroke="#e8442c" stroke-width="2.6" stroke-dasharray="3 1.2"/></svg>
<div class="t" style="left:907px;top:274.6px;font-size:20px;line-height:24.0px;color:#f04a2a;font-weight:normal;">25</div>
<div class="t" style="left:907px;top:333.0px;font-size:20px;line-height:24.0px;color:#f04a2a;font-weight:normal;">22</div>
<div class="t" style="left:907px;top:391.4px;font-size:20px;line-height:24.0px;color:#f04a2a;font-weight:normal;">19</div>
<div class="t" style="left:907px;top:449.8px;font-size:20px;line-height:24.0px;color:#f04a2a;font-weight:normal;">16</div>
<div class="t" style="left:907px;top:508.2px;font-size:20px;line-height:24.0px;color:#f04a2a;font-weight:normal;">13</div>
<div class="t" style="left:907px;top:566.5px;font-size:20px;line-height:24.0px;color:#f04a2a;font-weight:normal;">10</div>
<div class="t" style="left:907px;top:624.9px;font-size:20px;line-height:24.0px;color:#f04a2a;font-weight:normal;">7</div>
<div class="t" style="left:907px;top:683.3px;font-size:20px;line-height:24.0px;color:#f04a2a;font-weight:normal;">4</div>
<div class="t" style="left:907px;top:741.7px;font-size:20px;line-height:24.0px;color:#f04a2a;font-weight:normal;">1</div>
<div class="t" style="left:907px;top:800.1px;font-size:20px;line-height:24.0px;color:#f04a2a;font-weight:normal;">-2</div>
<div class="t" style="left:907px;top:858.5px;font-size:20px;line-height:24.0px;color:#f04a2a;font-weight:normal;">-5</div>
<div class="t" style="left:778.0px;width:400px;text-align:center;top:889.0px;font-size:20px;line-height:24.0px;color:#40d8f0;font-weight:normal">-3 V</div>
<div class="t" style="left:986.5999999999999px;width:400px;text-align:center;top:889.0px;font-size:20px;line-height:24.0px;color:#40d8f0;font-weight:normal">-1 V</div>
<div class="t" style="left:1195.2px;width:400px;text-align:center;top:889.0px;font-size:20px;line-height:24.0px;color:#40d8f0;font-weight:normal">1 V</div>
<div class="t" style="left:1403.8px;width:400px;text-align:center;top:889.0px;font-size:20px;line-height:24.0px;color:#40d8f0;font-weight:normal">3 V</div>
<div class="t" style="left:1612.4px;width:400px;text-align:center;top:889.0px;font-size:20px;line-height:24.0px;color:#40d8f0;font-weight:normal">5 V</div>
<div class="t" style="left:1821.0px;width:400px;text-align:center;top:889.0px;font-size:20px;line-height:24.0px;color:#40d8f0;font-weight:normal">7 V</div>
<div class="" style="left:2079px;top:204px;width:321px;height:714px;background:linear-gradient(90deg,#e8e8e8,#f4f4f4);border-left:1.5px solid #a8a8a8"></div>
<svg class="ic" style="left:0;top:0" width="2400" height="240" viewBox="0 0 2400 240"><defs><linearGradient id="gar" x1="0" y1="0" x2="0" y2="1"><stop offset="0" stop-color="#7fe07f"/><stop offset="1" stop-color="#2a9a3a"/></linearGradient></defs><path d="M2088 221.8 H2104 V218.8 L2110 224.6 L2104 230.2 V227.4 H2088 Z" fill="url(#gar)" stroke="#1c7a2a" stroke-width="1"/></svg>
<div class="" style="left:2085px;top:240px;width:291px;height:165px;background:#f7f7f7"></div>
<div class="" style="left:2091px;top:246px;width:284px;height:154px;background:#e6e6e6"></div>
<div class="chk" style="left:2093px;top:255px;width:20px;height:20px;"></div>
<svg class="ic" style="left:2096px;top:257px" width="14" height="16" viewBox="0 0 14 16"><path d="M2 8.5 L5.5 14 L12 1.5" fill="none" stroke="#000" stroke-width="2.6"/></svg>
<div class="t" style="left:2122px;top:253.0px;font-size:20px;line-height:24.0px;color:#000;font-weight:normal;">Time</div>
<div class="btn" style="left:2330px;top:248px;width:39px;height:33px;"></div>
<svg class="ic" style="left:2337.6px;top:252.6px" width="23.8" height="23.8" viewBox="0 0 32 32"><use href="#gear"/></svg>
<div class="t" style="left:2098px;top:289.0px;font-size:20px;line-height:24.0px;color:#000;font-weight:normal;">Position:</div>
<div class="edit" style="left:2205px;top:283px;width:163px;height:36px;"></div>
<div class="editbtn" style="left:2336px;top:284px;width:31px;height:34px;"></div>
<div class="t" style="left:2212px;top:289.0px;font-size:20px;line-height:24.0px;color:#000;font-weight:normal;">0 s</div>
<div class="ar" style="left:2344.0px;top:297.8px;border-left:8px solid transparent;border-right:8px solid transparent;border-top:6.8px solid #555"></div>
<div class="t" style="left:2098px;top:327.0px;font-size:20px;line-height:24.0px;color:#000;font-weight:normal;">Base:</div>
<div class="edit" style="left:2205px;top:321px;width:163px;height:36px;"></div>
<div class="editbtn" style="left:2336px;top:322px;width:31px;height:34px;"></div>
<div class="t" style="left:2212px;top:327.0px;font-size:20px;line-height:24.0px;color:#000;font-weight:normal;">10 ms/div</div>
<div class="ar" style="left:2344.0px;top:335.8px;border-left:8px solid transparent;border-right:8px solid transparent;border-top:6.8px solid #555"></div>
<div class="" style="left:2094px;top:360px;width:274px;height:39px;background:#d8d8d8;border:1.5px solid #b5b5b5;border-radius:4px"></div>
<svg class="ic" style="left:0;top:0" width="2400" height="400" viewBox="0 0 2400 400"><path d="M2227.6 369.5 H2233.5 V381.5 H2237.2 L2230.5 389.5 L2224 381.5 H2227.6 Z" fill="url(#gar2)" stroke="#1c7a2a" stroke-width="1"/></svg>
<div class="btn" style="left:2087px;top:408px;width:288px;height:36px;"></div>
<svg class="ic" style="left:2158px;top:414px" width="24" height="24" viewBox="0 0 24 24"><path d="M12 1 V23 M1 12 H23" stroke="#2aa52a" stroke-width="7"/><path d="M12 1 V8" stroke="#8fe07f" stroke-width="3"/></svg>
<div class="t" style="left:2183px;top:415.0px;font-size:20px;line-height:24.0px;color:#000;font-weight:normal;">Add Channel</div>
<div class="ar" style="left:2357px;top:424.6px;border-left:6px solid transparent;border-right:6px solid transparent;border-top:5.1px solid #555"></div>
<div class="" style="left:2086px;top:445px;width:289px;height:126px;background:#e6e6e6;border:5px solid #f6f218"></div>
<div class="chk" style="left:2093px;top:459px;width:20px;height:20px;"></div>
<svg class="ic" style="left:2096px;top:461px" width="14" height="16" viewBox="0 0 14 16"><path d="M2 8.5 L5.5 14 L12 1.5" fill="none" stroke="#000" stroke-width="2.6"/></svg>
<div class="t" style="left:2122px;top:457.0px;font-size:20px;line-height:24.0px;color:#000;font-weight:normal;">Channel 1</div>
<div class="btn" style="left:2330px;top:452px;width:39px;height:32px;"></div>
<svg class="ic" style="left:2338.0px;top:456.5px" width="23.0" height="23.0" viewBox="0 0 32 32"><use href="#gear"/></svg>
<div class="t" style="left:2098px;top:493.0px;font-size:20px;line-height:24.0px;color:#000;font-weight:normal;">Offset:</div>
<div class="edit" style="left:2205px;top:488px;width:163px;height:35px;"></div>
<div class="editbtn" style="left:2336px;top:489px;width:31px;height:33px;"></div>
<div class="t" style="left:2212px;top:493.5px;font-size:20px;line-height:24.0px;color:#000;font-weight:normal;">0 V</div>
<div class="ar" style="left:2344.0px;top:502.3px;border-left:8px solid transparent;border-right:8px solid transparent;border-top:6.8px solid #555"></div>
<div class="t" style="left:2098px;top:531.0px;font-size:20px;line-height:24.0px;color:#000;font-weight:normal;">Range:</div>
<div class="edit" style="left:2205px;top:526px;width:163px;height:35px;"></div>
<div class="editbtn" style="left:2336px;top:527px;width:31px;height:33px;"></div>
<div class="t" style="left:2212px;top:531.5px;font-size:20px;line-height:24.0px;color:#000;font-weight:normal;">2 V/div</div>
<div class="ar" style="left:2344.0px;top:540.3px;border-left:8px solid transparent;border-right:8px solid transparent;border-top:6.8px solid #555"></div>
<div class="" style="left:2086px;top:571px;width:289px;height:124px;background:#e6e6e6;border:5px solid #22e8f0"></div>
<div class="chk" style="left:2093px;top:585px;width:20px;height:20px;"></div>
<svg class="ic" style="left:2096px;top:587px" width="14" height="16" viewBox="0 0 14 16"><path d="M2 8.5 L5.5 14 L12 1.5" fill="none" stroke="#000" stroke-width="2.6"/></svg>
<div class="t" style="left:2122px;top:583.0px;font-size:20px;line-height:24.0px;color:#000;font-weight:normal;">Channel 2</div>
<div class="btn" style="left:2330px;top:578px;width:39px;height:32px;"></div>
<svg class="ic" style="left:2338.0px;top:582.5px" width="23.0" height="23.0" viewBox="0 0 32 32"><use href="#gear"/></svg>
<div class="t" style="left:2098px;top:619.0px;font-size:20px;line-height:24.0px;color:#000;font-weight:normal;">Offset:</div>
<div class="edit focus" style="left:2205px;top:614px;width:163px;height:35px;"></div>
<div class="editbtn" style="left:2336px;top:615px;width:31px;height:33px;"></div>
<div class="t" style="left:2212px;top:619.5px;font-size:20px;line-height:24.0px;color:#000;font-weight:normal;">-2 V|</div>
<div class="ar" style="left:2344.0px;top:628.3px;border-left:8px solid transparent;border-right:8px solid transparent;border-top:6.8px solid #555"></div>
<div class="t" style="left:2098px;top:657.0px;font-size:20px;line-height:24.0px;color:#000;font-weight:normal;">Range:</div>
<div class="edit" style="left:2205px;top:652px;width:163px;height:35px;"></div>
<div class="editbtn" style="left:2336px;top:653px;width:31px;height:33px;"></div>
<div class="t" style="left:2212px;top:657.5px;font-size:20px;line-height:24.0px;color:#000;font-weight:normal;">1 V/div</div>
<div class="ar" style="left:2344.0px;top:666.3px;border-left:8px solid transparent;border-right:8px solid transparent;border-top:6.8px solid #555"></div>
<div class="" style="left:2086px;top:697px;width:289px;height:167px;background:#e6e6e6;border:5px solid #ee3a1e"></div>
<div class="chk" style="left:2093px;top:711px;width:20px;height:20px;"></div>
<svg class="ic" style="left:2096px;top:713px" width="14" height="16" viewBox="0 0 14 16"><path d="M2 8.5 L5.5 14 L12 1.5" fill="none" stroke="#000" stroke-width="2.6"/></svg>
<div class="t" style="left:2122px;top:709.0px;font-size:20px;line-height:24.0px;color:#000;font-weight:normal;">Math 1</div>
<div class="btn" style="left:2294px;top:704px;width:38px;height:32px;"></div>
<svg class="ic" style="left:2301.5px;top:708.5px" width="23.0" height="23.0" viewBox="0 0 32 32"><use href="#gear"/></svg>
<div class="btn" style="left:2334px;top:704px;width:35px;height:32px;"></div>
<svg class="ic" style="left:2340px;top:708px" width="24" height="24" viewBox="0 0 24 24"><path d="M2 2 L22 22 M22 2 L2 22" stroke="#d42020" stroke-width="3.2"/></svg>
<div class="t" style="left:2098px;top:745.0px;font-size:20px;line-height:24.0px;color:#000;font-weight:normal;">Offset:</div>
<div class="edit" style="left:2205px;top:740px;width:163px;height:35px;"></div>
<div class="editbtn" style="left:2336px;top:741px;width:31px;height:33px;"></div>
<div class="t" style="left:2212px;top:745.5px;font-size:20px;line-height:24.0px;color:#000;font-weight:normal;">-10 mA</div>
<div class="ar" style="left:2344.0px;top:754.3px;border-left:8px solid transparent;border-right:8px solid transparent;border-top:6.8px solid #555"></div>
<div class="t" style="left:2098px;top:783.0px;font-size:20px;line-height:24.0px;color:#000;font-weight:normal;">Range:</div>
<div class="edit" style="left:2205px;top:778px;width:163px;height:35px;"></div>
<div class="editbtn" style="left:2336px;top:779px;width:31px;height:33px;"></div>
<div class="t" style="left:2212px;top:783.5px;font-size:20px;line-height:24.0px;color:#000;font-weight:normal;">3 mA/div</div>
<div class="ar" style="left:2344.0px;top:792.3px;border-left:8px solid transparent;border-right:8px solid transparent;border-top:6.8px solid #555"></div>
<div class="btn" style="left:2096px;top:817px;width:270px;height:38px;"></div>
<div class="t" style="left:2118px;top:824.0px;font-size:20px;line-height:24.0px;color:#000;font-weight:normal;">C1/100</div>
<div class="" style="left:2376px;top:240px;width:21px;height:675px;background:#f0f0f0;border-left:1px solid #dadada"></div>
<div class="ar" style="left:2379px;top:246px;border-left:7px solid transparent;border-right:7px solid transparent;border-bottom:9px solid #444"></div>
<div class="" style="left:2377px;top:803px;width:19px;height:87px;background:#dcdcdc"></div>
<div class="" style="left:2377px;top:259px;width:19px;height:1.5px;background:#c8c8c8"></div>
<div class="" style="left:2377px;top:890px;width:19px;height:1.5px;background:#c8c8c8"></div>
<div class="ar" style="left:2379px;top:899.2px;border-left:7px solid transparent;border-right:7px solid transparent;border-top:6.0px solid #444"></div>
<div class="" style="left:0px;top:918px;width:2400px;height:20px;background:linear-gradient(#d6d6d6 0,#d6d6d6 8px,#a9a9a9 8px,#a9a9a9 10.5px,#d2d2d2 10.5px,#d2d2d2 17.5px,#a4a4a4 17.5px,#a4a4a4 20px)"></div>
<div class="" style="left:0px;top:938px;width:2400px;height:32px;background:#f9f9f9;border-bottom:1.5px solid #b0b0b0"></div>
<div class="t" style="left:5px;top:939.0px;font-size:20px;line-height:24.0px;color:#000;font-weight:normal;">Wavegen 1</div>
<svg class="ic" style="left:2376px;top:941px" width="22" height="22" viewBox="0 0 22 22"><circle cx="11" cy="11" r="10.5" fill="#404040"/><path d="M6.8 6.8 L15.2 15.2 M15.2 6.8 L6.8 15.2" stroke="#fff" stroke-width="3.8" stroke-linecap="round"/></svg>
<div class="" style="left:0px;top:969px;width:2400px;height:33px;background:#fff;border-bottom:1px solid #dedede"></div>
<div class="t" style="left:13px;top:972.7px;font-size:22.2px;line-height:26.6px;color:#000;font-weight:normal;"><u>F</u>ile</div>
<div class="t" style="left:69px;top:972.7px;font-size:22.2px;line-height:26.6px;color:#000;font-weight:normal;"><u>C</u>ontrol</div>
<div class="t" style="left:164px;top:972.7px;font-size:22.2px;line-height:26.6px;color:#000;font-weight:normal;"><u>E</u>dit</div>
<div class="t" style="left:223px;top:972.7px;font-size:22.2px;line-height:26.6px;color:#000;font-weight:normal;"><u>W</u>indow</div>
<div class="btn" style="left:2370px;top:972px;width:32px;height:32px;"></div>
<svg class="ic" style="left:0;top:0" width="2400" height="998" viewBox="0 0 2400 998"><rect x="2376.0" y="975.5" width="17.0" height="13.5" rx="1" fill="#f2f8ff" stroke="#4f5f7c" stroke-width="1.3"/><rect x="2376.7" y="976.2" width="15.6" height="3" fill="#86ade6"/><rect x="2379.5" y="981.0" width="17.0" height="13.5" rx="1" fill="#f2f8ff" stroke="#4f5f7c" stroke-width="1.3"/><rect x="2380.2" y="981.7" width="15.6" height="3" fill="#86ade6"/></svg>
<div class="" style="left:0px;top:1002px;width:2400px;height:52px;background:linear-gradient(#f3f3f3,#ececec);border-bottom:2px solid #ababab"></div>
<div class="btn" style="left:29px;top:1013px;width:180px;height:35px;"></div>
<svg class="ic" style="left:31px;top:1016px" width="27" height="28" viewBox="0 0 27 28"><path d="M1.5 1 L24.5 14 L1.5 27 Z" fill="url(#grn)" stroke="#0a4a18" stroke-width="1.2"/></svg>
<div class="t" style="left:61px;top:1018.0px;font-size:20px;line-height:24.0px;color:#000;font-weight:normal;">Run All</div>
<div class="btn" style="left:245px;top:1013px;width:143px;height:35px;"></div>
<div class="t" style="left:253px;top:1018.5px;font-size:20px;line-height:24.0px;color:#000;font-weight:normal;">Channels</div>
<div class="ar" style="left:358px;top:1027.3px;border-left:8px solid transparent;border-right:8px solid transparent;border-top:6.8px solid #555"></div>
<div class="btn" style="left:424px;top:1013px;width:288px;height:35px;"></div>
<div class="t" style="left:432px;top:1018.5px;font-size:20px;line-height:24.0px;color:#000;font-weight:normal;">Synchronized</div>
<div class="ar" style="left:682px;top:1027.3px;border-left:8px solid transparent;border-right:8px solid transparent;border-top:6.8px solid #555"></div>
<div class="t" style="left:751px;top:1018.0px;font-size:20px;line-height:24.0px;color:#000;font-weight:normal;">Trigger:</div>
<div class="btn" style="left:841px;top:1013px;width:244px;height:35px;"></div>
<div class="t" style="left:849px;top:1018.5px;font-size:20px;line-height:24.0px;color:#000;font-weight:normal;">None</div>
<div class="ar" style="left:1055px;top:1027.3px;border-left:8px solid transparent;border-right:8px solid transparent;border-top:6.8px solid #555"></div>
<div class="btn" style="left:1121px;top:1011px;width:39px;height:38px;"></div>
<svg class="ic" style="left:1126.8px;top:1016.3px" width="27.4" height="27.4" viewBox="0 0 32 32"><use href="#gear"/></svg>
<div class="t" style="left:1199px;top:1018.0px;font-size:20px;line-height:24.0px;color:#000;font-weight:normal;">Wait:</div>
<div class="edit" style="left:1271px;top:1013px;width:195px;height:35px;"></div>
<div class="editbtn" style="left:1434px;top:1014px;width:31px;height:33px;"></div>
<div class="t" style="left:1278px;top:1018.5px;font-size:20px;line-height:24.0px;color:#000;font-weight:normal;">none</div>
<div class="ar" style="left:1442.0px;top:1027.3px;border-left:8px solid transparent;border-right:8px solid transparent;border-top:6.8px solid #555"></div>
<div class="t" style="left:1504px;top:1018.0px;font-size:20px;line-height:24.0px;color:#000;font-weight:normal;">Run:</div>
<div class="edit" style="left:1575px;top:1013px;width:240px;height:35px;"></div>
<div class="editbtn" style="left:1784px;top:1014px;width:30px;height:33px;"></div>
<div class="t" style="left:1582px;top:1018.5px;font-size:20px;line-height:24.0px;color:#000;font-weight:normal;">25 ms</div>
<div class="ar" style="left:1791.5px;top:1027.3px;border-left:8px solid transparent;border-right:8px solid transparent;border-top:6.8px solid #555"></div>
<div class="t" style="left:1855px;top:1018.0px;font-size:20px;line-height:24.0px;color:#000;font-weight:normal;">Repeat:</div>
<div class="edit" style="left:1945px;top:1013px;width:199px;height:35px;"></div>
<div class="editbtn" style="left:2113px;top:1014px;width:30px;height:33px;"></div>
<div class="t" style="left:1952px;top:1018.5px;font-size:20px;line-height:24.0px;color:#000;font-weight:normal;">infinite</div>
<div class="ar" style="left:2120.5px;top:1027.3px;border-left:8px solid transparent;border-right:8px solid transparent;border-top:6.8px solid #555"></div>
<div class="" style="left:0px;top:1055px;width:1111px;height:34px;background:#ececec;border-top:2px solid #ababab;border-bottom:2px solid #ababab"></div>
<div class="t" style="left:5px;top:1058.0px;font-size:20px;line-height:24.0px;color:#000;font-weight:normal;">Channel 1</div>
<svg class="ic" style="left:1056px;top:1061px" width="22" height="22" viewBox="0 0 22 22"><circle cx="11" cy="11" r="10.5" fill="#404040"/><rect x="5.5" y="9" width="8" height="6.5" fill="none" stroke="#fff" stroke-width="1.8"/><path d="M8.5 9 V6 H16.5 V12.5 H13.5" fill="none" stroke="#fff" stroke-width="1.8"/></svg>
<svg class="ic" style="left:1085px;top:1061px" width="22" height="22" viewBox="0 0 22 22"><circle cx="11" cy="11" r="10.5" fill="#404040"/><path d="M6.8 6.8 L15.2 15.2 M15.2 6.8 L6.8 15.2" stroke="#fff" stroke-width="3.8" stroke-linecap="round"/></svg>
<div class="" style="left:0px;top:1089px;width:1111px;height:410px;background:#ececec"></div>
<div class="btn" style="left:0px;top:1093px;width:123px;height:37px;"></div>
<svg class="ic" style="left:3px;top:1099px" width="22" height="25" viewBox="0 0 22 25"><path d="M1 1 L21 12.5 L1 24 Z" fill="#8c8c8c" stroke="#777" stroke-width="1"/></svg>
<div class="t" style="left:31px;top:1099.0px;font-size:20px;line-height:24.0px;color:#8a8a8a;font-weight:normal;">Run</div>
<div class="chk" style="left:134px;top:1101px;width:20px;height:20px;"></div>
<svg class="ic" style="left:137px;top:1103px" width="14" height="16" viewBox="0 0 14 16"><path d="M2 8.5 L5.5 14 L12 1.5" fill="none" stroke="#000" stroke-width="2.6"/></svg>
<div class="t" style="left:162px;top:1099.0px;font-size:20px;line-height:24.0px;color:#000;font-weight:normal;">Enable</div>
<div class="btn" style="left:243px;top:1093px;width:143px;height:37px;"></div>
<div class="t" style="left:251px;top:1099.5px;font-size:20px;line-height:24.0px;color:#000;font-weight:normal;">Simple</div>
<div class="ar" style="left:356px;top:1108.3px;border-left:8px solid transparent;border-right:8px solid transparent;border-top:6.8px solid #555"></div>
<div class="btn" style="left:396px;top:1092px;width:39px;height:38px;"></div>
<svg class="ic" style="left:401.8px;top:1097.3px" width="27.4" height="27.4" viewBox="0 0 32 32"><use href="#gear"/></svg>
<div class="t" style="left:3px;top:1148.5px;font-size:20px;line-height:24.0px;color:#000;font-weight:normal;">Type:</div>
<div class="t" style="left:3px;top:1186.7px;font-size:20px;line-height:24.0px;color:#000;font-weight:normal;">Frequency:</div>
<div class="t" style="left:3px;top:1224.9px;font-size:20px;line-height:24.0px;color:#000;font-weight:normal;">Amplitude:</div>
<div class="t" style="left:3px;top:1263.1px;font-size:20px;line-height:24.0px;color:#000;font-weight:normal;">Offset:</div>
<div class="t" style="left:3px;top:1301.3px;font-size:20px;line-height:24.0px;color:#000;font-weight:normal;">Symmetry:</div>
<div class="t" style="left:3px;top:1339.5px;font-size:20px;line-height:24.0px;color:#000;font-weight:normal;">Phase:</div>
<div class="btn" style="left:148px;top:1142px;width:179px;height:36px;"></div>
<div class="t" style="left:186px;top:1148.0px;font-size:20px;line-height:24.0px;color:#000;font-weight:normal;">Triangle</div>
<div class="ar" style="left:297px;top:1156.8px;border-left:8px solid transparent;border-right:8px solid transparent;border-top:6.8px solid #555"></div>
<svg class="ic" style="left:155px;top:1148px" width="26" height="24" viewBox="0 0 26 24"><path d="M1 14 L7 2 L18 22 L25 8" fill="none" stroke="#111" stroke-width="1.8"/></svg>
<div class="btn" style="left:330px;top:1142px;width:38px;height:36px;"></div>
<svg class="ic" style="left:336.0px;top:1147.0px" width="25.9" height="25.9" viewBox="0 0 32 32"><use href="#gear"/></svg>
<div class="edit" style="left:148px;top:1181.0px;width:220px;height:35px;"></div>
<div class="editbtn" style="left:336px;top:1182.0px;width:31px;height:33px;"></div>
<div class="t" style="left:155px;top:1186.5px;font-size:20px;line-height:24.0px;color:#000;font-weight:normal;">400 Hz</div>
<div class="ar" style="left:344.0px;top:1195.3px;border-left:8px solid transparent;border-right:8px solid transparent;border-top:6.8px solid #555"></div>
<div class="edit" style="left:148px;top:1219.2px;width:220px;height:35px;"></div>
<div class="editbtn" style="left:336px;top:1220.2px;width:31px;height:33px;"></div>
<div class="t" style="left:155px;top:1224.7px;font-size:20px;line-height:24.0px;color:#000;font-weight:normal;">2.5 V</div>
<div class="ar" style="left:344.0px;top:1233.5px;border-left:8px solid transparent;border-right:8px solid transparent;border-top:6.8px solid #555"></div>
<div class="edit" style="left:148px;top:1257.4px;width:220px;height:35px;"></div>
<div class="editbtn" style="left:336px;top:1258.4px;width:31px;height:33px;"></div>
<div class="t" style="left:155px;top:1262.9px;font-size:20px;line-height:24.0px;color:#000;font-weight:normal;">2.5 V</div>
<div class="ar" style="left:344.0px;top:1271.7px;border-left:8px solid transparent;border-right:8px solid transparent;border-top:6.8px solid #555"></div>
<div class="edit" style="left:148px;top:1295.6px;width:220px;height:35px;"></div>
<div class="editbtn" style="left:336px;top:1296.6px;width:31px;height:33px;"></div>
<div class="t" style="left:155px;top:1301.1px;font-size:20px;line-height:24.0px;color:#000;font-weight:normal;">50 %</div>
<div class="ar" style="left:344.0px;top:1309.9px;border-left:8px solid transparent;border-right:8px solid transparent;border-top:6.8px solid #555"></div>
<div class="edit" style="left:148px;top:1333.8px;width:220px;height:35px;"></div>
<div class="editbtn" style="left:336px;top:1334.8px;width:31px;height:33px;"></div>
<div class="t" style="left:155px;top:1339.3px;font-size:20px;line-height:24.0px;color:#000;font-weight:normal;">270 °</div>
<div class="ar" style="left:344.0px;top:1348.1px;border-left:8px solid transparent;border-right:8px solid transparent;border-top:6.8px solid #555"></div>
<div class="" style="left:376px;top:1140px;width:735px;height:357px;background:#000"></div>
<div class="" style="left:411px;top:1141px;width:144px;height:34px;background:#eeeeee;border:3px solid #e0141a"></div>
<div class="t" style="left:283.0px;width:400px;text-align:center;top:1146.0px;font-size:20px;line-height:24.0px;color:#000;font-weight:bold">Ready</div>
<div class="btn" style="left:999px;top:1141px;width:39px;height:34px;"></div>
<svg class="ic" style="left:1006.3px;top:1145.8px" width="24.5" height="24.5" viewBox="0 0 32 32"><use href="#gear"/></svg>
<div class="t" style="left:1067px;top:1146.6px;font-size:19px;line-height:22.8px;color:#fff;font-weight:normal;">V</div>
<svg style="left:0;top:0" width="1120" height="1500" viewBox="0 0 1120 1500"><path d="M473.9 1176.5V1459.6M536.4 1176.5V1459.6M599.0 1176.5V1459.6M661.5 1176.5V1459.6M724.0 1176.5V1459.6M786.5 1176.5V1459.6M849.0 1176.5V1459.6M911.6 1176.5V1459.6M974.1 1176.5V1459.6M411.4 1204.8H1036.6M411.4 1233.1H1036.6M411.4 1261.4H1036.6M411.4 1289.7H1036.6M411.4 1318.0H1036.6M411.4 1346.4H1036.6M411.4 1374.7H1036.6M411.4 1403.0H1036.6M411.4 1431.3H1036.6" stroke="#bdbdbd" stroke-width="1.6" stroke-dasharray="2.6 2"/><rect x="411.4" y="1176.5" width="625.2" height="283.1" fill="none" stroke="#bdbdbd" stroke-width="1.6"/><path d="M417.7 1176.5v4M417.7 1459.6v-4M423.9 1176.5v4M423.9 1459.6v-4M430.2 1176.5v4M430.2 1459.6v-4M436.4 1176.5v4M436.4 1459.6v-4M442.7 1176.5v8M442.7 1459.6v-8M448.9 1176.5v4M448.9 1459.6v-4M455.2 1176.5v4M455.2 1459.6v-4M461.4 1176.5v4M461.4 1459.6v-4M467.7 1176.5v4M467.7 1459.6v-4M480.2 1176.5v4M480.2 1459.6v-4M486.4 1176.5v4M486.4 1459.6v-4M492.7 1176.5v4M492.7 1459.6v-4M498.9 1176.5v4M498.9 1459.6v-4M505.2 1176.5v8M505.2 1459.6v-8M511.4 1176.5v4M511.4 1459.6v-4M517.7 1176.5v4M517.7 1459.6v-4M523.9 1176.5v4M523.9 1459.6v-4M530.2 1176.5v4M530.2 1459.6v-4M542.7 1176.5v4M542.7 1459.6v-4M548.9 1176.5v4M548.9 1459.6v-4M555.2 1176.5v4M555.2 1459.6v-4M561.4 1176.5v4M561.4 1459.6v-4M567.7 1176.5v8M567.7 1459.6v-8M574.0 1176.5v4M574.0 1459.6v-4M580.2 1176.5v4M580.2 1459.6v-4M586.5 1176.5v4M586.5 1459.6v-4M592.7 1176.5v4M592.7 1459.6v-4M605.2 1176.5v4M605.2 1459.6v-4M611.5 1176.5v4M611.5 1459.6v-4M617.7 1176.5v4M617.7 1459.6v-4M624.0 1176.5v4M624.0 1459.6v-4M630.2 1176.5v8M630.2 1459.6v-8M636.5 1176.5v4M636.5 1459.6v-4M642.7 1176.5v4M642.7 1459.6v-4M649.0 1176.5v4M649.0 1459.6v-4M655.2 1176.5v4M655.2 1459.6v-4M667.7 1176.5v4M667.7 1459.6v-4M674.0 1176.5v4M674.0 1459.6v-4M680.2 1176.5v4M680.2 1459.6v-4M686.5 1176.5v4M686.5 1459.6v-4M692.7 1176.5v8M692.7 1459.6v-8M699.0 1176.5v4M699.0 1459.6v-4M705.2 1176.5v4M705.2 1459.6v-4M711.5 1176.5v4M711.5 1459.6v-4M717.7 1176.5v4M717.7 1459.6v-4M730.3 1176.5v4M730.3 1459.6v-4M736.5 1176.5v4M736.5 1459.6v-4M742.8 1176.5v4M742.8 1459.6v-4M749.0 1176.5v4M749.0 1459.6v-4M755.3 1176.5v8M755.3 1459.6v-8M761.5 1176.5v4M761.5 1459.6v-4M767.8 1176.5v4M767.8 1459.6v-4M774.0 1176.5v4M774.0 1459.6v-4M780.3 1176.5v4M780.3 1459.6v-4M792.8 1176.5v4M792.8 1459.6v-4M799.0 1176.5v4M799.0 1459.6v-4M805.3 1176.5v4M805.3 1459.6v-4M811.5 1176.5v4M811.5 1459.6v-4M817.8 1176.5v8M817.8 1459.6v-8M824.0 1176.5v4M824.0 1459.6v-4M830.3 1176.5v4M830.3 1459.6v-4M836.5 1176.5v4M836.5 1459.6v-4M842.8 1176.5v4M842.8 1459.6v-4M855.3 1176.5v4M855.3 1459.6v-4M861.5 1176.5v4M861.5 1459.6v-4M867.8 1176.5v4M867.8 1459.6v-4M874.0 1176.5v4M874.0 1459.6v-4M880.3 1176.5v8M880.3 1459.6v-8M886.6 1176.5v4M886.6 1459.6v-4M892.8 1176.5v4M892.8 1459.6v-4M899.1 1176.5v4M899.1 1459.6v-4M905.3 1176.5v4M905.3 1459.6v-4M917.8 1176.5v4M917.8 1459.6v-4M924.1 1176.5v4M924.1 1459.6v-4M930.3 1176.5v4M930.3 1459.6v-4M936.6 1176.5v4M936.6 1459.6v-4M942.8 1176.5v8M942.8 1459.6v-8M949.1 1176.5v4M949.1 1459.6v-4M955.3 1176.5v4M955.3 1459.6v-4M961.6 1176.5v4M961.6 1459.6v-4M967.8 1176.5v4M967.8 1459.6v-4M980.3 1176.5v4M980.3 1459.6v-4M986.6 1176.5v4M986.6 1459.6v-4M992.8 1176.5v4M992.8 1459.6v-4M999.1 1176.5v4M999.1 1459.6v-4M1005.3 1176.5v8M1005.3 1459.6v-8M1011.6 1176.5v4M1011.6 1459.6v-4M1017.8 1176.5v4M1017.8 1459.6v-4M1024.1 1176.5v4M1024.1 1459.6v-4M1030.3 1176.5v4M1030.3 1459.6v-4M1036.6 1179.3h-3M1036.6 1182.2h-3M1036.6 1185.0h-3M1036.6 1187.8h-3M1036.6 1190.7h-6M1036.6 1193.5h-3M1036.6 1196.3h-3M1036.6 1199.1h-3M1036.6 1202.0h-3M1036.6 1207.6h-3M1036.6 1210.5h-3M1036.6 1213.3h-3M1036.6 1216.1h-3M1036.6 1219.0h-6M1036.6 1221.8h-3M1036.6 1224.6h-3M1036.6 1227.5h-3M1036.6 1230.3h-3M1036.6 1236.0h-3M1036.6 1238.8h-3M1036.6 1241.6h-3M1036.6 1244.4h-3M1036.6 1247.3h-6M1036.6 1250.1h-3M1036.6 1252.9h-3M1036.6 1255.8h-3M1036.6 1258.6h-3M1036.6 1264.3h-3M1036.6 1267.1h-3M1036.6 1269.9h-3M1036.6 1272.8h-3M1036.6 1275.6h-6M1036.6 1278.4h-3M1036.6 1281.2h-3M1036.6 1284.1h-3M1036.6 1286.9h-3M1036.6 1292.6h-3M1036.6 1295.4h-3M1036.6 1298.2h-3M1036.6 1301.1h-3M1036.6 1303.9h-6M1036.6 1306.7h-3M1036.6 1309.6h-3M1036.6 1312.4h-3M1036.6 1315.2h-3M1036.6 1320.9h-3M1036.6 1323.7h-3M1036.6 1326.5h-3M1036.6 1329.4h-3M1036.6 1332.2h-6M1036.6 1335.0h-3M1036.6 1337.9h-3M1036.6 1340.7h-3M1036.6 1343.5h-3M1036.6 1349.2h-3M1036.6 1352.0h-3M1036.6 1354.9h-3M1036.6 1357.7h-3M1036.6 1360.5h-6M1036.6 1363.3h-3M1036.6 1366.2h-3M1036.6 1369.0h-3M1036.6 1371.8h-3M1036.6 1377.5h-3M1036.6 1380.3h-3M1036.6 1383.2h-3M1036.6 1386.0h-3M1036.6 1388.8h-6M1036.6 1391.7h-3M1036.6 1394.5h-3M1036.6 1397.3h-3M1036.6 1400.1h-3M1036.6 1405.8h-3M1036.6 1408.6h-3M1036.6 1411.5h-3M1036.6 1414.3h-3M1036.6 1417.1h-6M1036.6 1420.0h-3M1036.6 1422.8h-3M1036.6 1425.6h-3M1036.6 1428.5h-3M1036.6 1434.1h-3M1036.6 1437.0h-3M1036.6 1439.8h-3M1036.6 1442.6h-3M1036.6 1445.4h-6M1036.6 1448.3h-3M1036.6 1451.1h-3M1036.6 1453.9h-3M1036.6 1456.8h-3" stroke="#bdbdbd" stroke-width="1.5"/><path d="M411.4 1459.6 L427.0 1176.5 L442.7 1459.6 L458.3 1176.5 L473.9 1459.6 L489.5 1176.5 L505.2 1459.6 L520.8 1176.5 L536.4 1459.6 L552.1 1176.5 L567.7 1459.6 L583.3 1176.5 L599.0 1459.6 L614.6 1176.5 L630.2 1459.6 L645.8 1176.5 L661.5 1459.6 L677.1 1176.5 L692.7 1459.6 L708.4 1176.5 L724.0 1459.6 L739.6 1176.5 L755.3 1459.6 L770.9 1176.5 L786.5 1459.6 L802.1 1176.5 L817.8 1459.6 L833.4 1176.5 L849.0 1459.6 L864.7 1176.5 L880.3 1459.6 L895.9 1176.5 L911.6 1459.6 L927.2 1176.5 L942.8 1459.6 L958.4 1176.5 L974.1 1459.6 L989.7 1176.5 L1005.3 1459.6 L1021.0 1176.5 L1036.6 1459.6" fill="none" stroke="#e2e46a" stroke-width="1.7"/><path d="M879 1319 V1460" stroke="#e2e46a" stroke-width="2.2"/><path d="M879 1404 V1433" stroke="#e6e83a" stroke-width="5"/><path d="M473.0 1432 V1460" stroke="#e6e83a" stroke-width="3.5"/><path d="M535.5 1432 V1460" stroke="#e6e83a" stroke-width="3.5"/><path d="M598.0 1432 V1460" stroke="#e6e83a" stroke-width="3.5"/><path d="M660.5 1432 V1460" stroke="#e6e83a" stroke-width="3.5"/><path d="M723.0 1432 V1460" stroke="#e6e83a" stroke-width="3.5"/><path d="M785.5 1432 V1460" stroke="#e6e83a" stroke-width="3.5"/><path d="M848.0 1432 V1460" stroke="#e6e83a" stroke-width="3.5"/><path d="M910.5 1432 V1460" stroke="#e6e83a" stroke-width="3.5"/><path d="M973.0 1432 V1460" stroke="#e6e83a" stroke-width="3.5"/><path d="M1035.5 1432 V1460" stroke="#e6e83a" stroke-width="3.5"/></svg>
<div class="t" style="left:1041px;top:1176.5px;font-size:20px;line-height:24.0px;color:#fff;font-weight:normal;">5</div>
<div class="t" style="left:1041px;top:1202.5px;font-size:20px;line-height:24.0px;color:#fff;font-weight:normal;">4.5</div>
<div class="t" style="left:1041px;top:1228.6px;font-size:20px;line-height:24.0px;color:#fff;font-weight:normal;">4</div>
<div class="t" style="left:1041px;top:1254.7px;font-size:20px;line-height:24.0px;color:#fff;font-weight:normal;">3.5</div>
<div class="t" style="left:1041px;top:1280.7px;font-size:20px;line-height:24.0px;color:#fff;font-weight:normal;">3</div>
<div class="t" style="left:1041px;top:1306.8px;font-size:20px;line-height:24.0px;color:#fff;font-weight:normal;">2.5</div>
<div class="t" style="left:1041px;top:1332.8px;font-size:20px;line-height:24.0px;color:#fff;font-weight:normal;">2</div>
<div class="t" style="left:1041px;top:1358.8px;font-size:20px;line-height:24.0px;color:#fff;font-weight:normal;">1.5</div>
<div class="t" style="left:1041px;top:1384.9px;font-size:20px;line-height:24.0px;color:#fff;font-weight:normal;">1</div>
<div class="t" style="left:1041px;top:1411.0px;font-size:20px;line-height:24.0px;color:#fff;font-weight:normal;">0.5</div>
<div class="t" style="left:1041px;top:1437.0px;font-size:20px;line-height:24.0px;color:#fff;font-weight:normal;">0</div>
<div class="t" style="left:217.0px;width:400px;text-align:center;top:1468.0px;font-size:20px;line-height:24.0px;color:#fff;font-weight:normal">0 ms</div>
<div class="t" style="left:343.4px;width:400px;text-align:center;top:1468.0px;font-size:20px;line-height:24.0px;color:#fff;font-weight:normal">10 ms</div>
<div class="t" style="left:469.79999999999995px;width:400px;text-align:center;top:1468.0px;font-size:20px;line-height:24.0px;color:#fff;font-weight:normal">20 ms</div>
<div class="t" style="left:596.2px;width:400px;text-align:center;top:1468.0px;font-size:20px;line-height:24.0px;color:#fff;font-weight:normal">30 ms</div>
<div class="t" style="left:722.6px;width:400px;text-align:center;top:1468.0px;font-size:20px;line-height:24.0px;color:#fff;font-weight:normal">40 ms</div>
<div class="t" style="left:849.0px;width:400px;text-align:center;top:1468.0px;font-size:20px;line-height:24.0px;color:#fff;font-weight:normal">50 ms</div>
<div class="" style="left:1111px;top:1055px;width:10px;height:444px;background:#d8d8d8;border-left:1.5px solid #b0b0b0;border-right:1.5px solid #b0b0b0"></div>
<div class="" style="left:1121px;top:1055px;width:1279px;height:34px;background:#ececec;border-top:2px solid #ababab;border-bottom:2px solid #ababab"></div>
<div class="t" style="left:1128px;top:1058.0px;font-size:20px;line-height:24.0px;color:#000;font-weight:normal;">Channel 2</div>
<svg class="ic" style="left:2347px;top:1061px" width="22" height="22" viewBox="0 0 22 22"><circle cx="11" cy="11" r="10.5" fill="#404040"/><rect x="5.5" y="9" width="8" height="6.5" fill="none" stroke="#fff" stroke-width="1.8"/><path d="M8.5 9 V6 H16.5 V12.5 H13.5" fill="none" stroke="#fff" stroke-width="1.8"/></svg>
<svg class="ic" style="left:2376px;top:1061px" width="22" height="22" viewBox="0 0 22 22"><circle cx="11" cy="11" r="10.5" fill="#404040"/><path d="M6.8 6.8 L15.2 15.2 M15.2 6.8 L6.8 15.2" stroke="#fff" stroke-width="3.8" stroke-linecap="round"/></svg>
<div class="" style="left:1121px;top:1089px;width:1279px;height:410px;background:#ececec"></div>
<div class="btn" style="left:1123px;top:1093px;width:124px;height:37px;"></div>
<svg class="ic" style="left:1126px;top:1099px" width="22" height="25" viewBox="0 0 22 25"><path d="M1 1 L21 12.5 L1 24 Z" fill="#8c8c8c" stroke="#777" stroke-width="1"/></svg>
<div class="t" style="left:1154px;top:1099.0px;font-size:20px;line-height:24.0px;color:#8a8a8a;font-weight:normal;">Run</div>
<div class="chk" style="left:1257px;top:1101px;width:20px;height:20px;"></div>
<svg class="ic" style="left:1260px;top:1103px" width="14" height="16" viewBox="0 0 14 16"><path d="M2 8.5 L5.5 14 L12 1.5" fill="none" stroke="#000" stroke-width="2.6"/></svg>
<div class="t" style="left:1286px;top:1099.0px;font-size:20px;line-height:24.0px;color:#000;font-weight:normal;">Enable</div>
<div class="btn" style="left:1367px;top:1093px;width:142px;height:37px;"></div>
<div class="t" style="left:1375px;top:1099.5px;font-size:20px;line-height:24.0px;color:#000;font-weight:normal;">Custom</div>
<div class="ar" style="left:1479px;top:1108.3px;border-left:8px solid transparent;border-right:8px solid transparent;border-top:6.8px solid #555"></div>
<div class="btn" style="left:1520px;top:1092px;width:39px;height:38px;"></div>
<svg class="ic" style="left:1525.8px;top:1097.3px" width="27.4" height="27.4" viewBox="0 0 32 32"><use href="#gear"/></svg>
<svg class="ic" style="left:1138px;top:1150px" width="30" height="32" viewBox="0 0 30 32"><path d="M3 8 H20 L24 12 V30 H3 Z" fill="#fafafa" stroke="#ccc"/><circle cx="20" cy="8" r="7" fill="#22b033"/><path d="M20 4 V12 M16 8 H24" stroke="#fff" stroke-width="2.2"/></svg>
<div class="t" style="left:1170px;top:1155.8px;font-size:17px;line-height:20.4px;color:#000;font-weight:normal;">New</div>
<svg class="ic" style="left:1226px;top:1150px" width="30" height="32" viewBox="0 0 30 32"><path d="M6 2 H24 L28 6 V28 H6 Z" fill="#f8f8f8" stroke="#bbb"/><path d="M1 12 H12 M8 8 L12 12 L8 16" fill="none" stroke="#bbb" stroke-width="1.5"/></svg>
<div class="t" style="left:1260px;top:1155.8px;font-size:17px;line-height:20.4px;color:#000;font-weight:normal;">Import</div>
<svg class="ic" style="left:1334px;top:1150px" width="26" height="32" viewBox="0 0 26 32"><rect x="2" y="2" width="21" height="28" fill="#eef2fa" stroke="#bbb"/><path d="M5 8 H20 M5 13 H20 M5 18 H20 M5 23 H20" stroke="#c8d4ea"/><path d="M5 5 L20 26" stroke="#d6b030" stroke-width="3"/></svg>
<div class="t" style="left:1365px;top:1155.8px;font-size:17px;line-height:20.4px;color:#000;font-weight:normal;">Edit</div>
<svg class="ic" style="left:1417px;top:1158px" width="26" height="20" viewBox="0 0 26 20"><rect x="1" y="1" width="22" height="7" rx="3" fill="#e02020"/><path d="M18 13 L24 13 L21 17 Z" fill="#444"/></svg>
<div class="" style="left:1123px;top:1191px;width:313px;height:306px;background:#fff;border:1.5px solid #c8c8c8"></div>
<div class="" style="left:1127px;top:1192px;width:287px;height:42px;background:#d0d0d0"></div>
<div class="" style="left:1127px;top:1192px;width:44px;height:42px;background:#dde9f6"></div>
<svg class="ic" style="left:1128px;top:1192px" width="42" height="42" viewBox="0 0 42 42"><path d="M1 40 H8 V32 H15 V24 H22 V16 H29 V9 H36 V2 H42" fill="none" stroke="#222" stroke-width="1.8"/></svg>
<div class="t" style="left:1180px;top:1201.0px;font-size:20px;line-height:24.0px;color:#000;font-weight:normal;">Custom1</div>
<div class="" style="left:1414px;top:1192px;width:21px;height:304px;background:#fafafa;border-left:1px solid #dadada"></div>
<div class="" style="left:1415px;top:1211px;width:20px;height:1.5px;background:#d4d4d4"></div>
<div class="" style="left:1415px;top:1473px;width:20px;height:1.5px;background:#d4d4d4"></div>
<div class="ar" style="left:1418px;top:1199px;border-left:7px solid transparent;border-right:7px solid transparent;border-bottom:9px solid #444"></div>
<div class="ar" style="left:1418px;top:1481.2px;border-left:7px solid transparent;border-right:7px solid transparent;border-top:6.0px solid #444"></div>
<div class="t" style="left:1441px;top:1192.4px;font-size:20px;line-height:24.0px;color:#000;font-weight:normal;">Frequency:</div>
<div class="edit" style="left:1441px;top:1216.0px;width:220px;height:35px;"></div>
<div class="editbtn" style="left:1630px;top:1217.0px;width:30px;height:33px;"></div>
<div class="t" style="left:1448px;top:1221.5px;font-size:20px;line-height:24.0px;color:#000;font-weight:normal;">40 Hz</div>
<div class="ar" style="left:1637.5px;top:1230.3px;border-left:8px solid transparent;border-right:8px solid transparent;border-top:6.8px solid #555"></div>
<div class="t" style="left:1441px;top:1253.6px;font-size:20px;line-height:24.0px;color:#000;font-weight:normal;">Sample Rate:</div>
<div class="edit" style="left:1441px;top:1277.2px;width:220px;height:35px;"></div>
<div class="editbtn" style="left:1630px;top:1278.2px;width:30px;height:33px;"></div>
<div class="t" style="left:1448px;top:1282.7px;font-size:20px;line-height:24.0px;color:#000;font-weight:normal;">163.84 kHz</div>
<div class="ar" style="left:1637.5px;top:1291.5px;border-left:8px solid transparent;border-right:8px solid transparent;border-top:6.8px solid #555"></div>
<div class="t" style="left:1441px;top:1314.8px;font-size:20px;line-height:24.0px;color:#000;font-weight:normal;">Amplitude:</div>
<div class="edit" style="left:1441px;top:1338.4px;width:220px;height:35px;"></div>
<div class="editbtn" style="left:1630px;top:1339.4px;width:30px;height:33px;"></div>
<div class="t" style="left:1448px;top:1343.9px;font-size:20px;line-height:24.0px;color:#000;font-weight:normal;">500 mV</div>
<div class="ar" style="left:1637.5px;top:1352.7px;border-left:8px solid transparent;border-right:8px solid transparent;border-top:6.8px solid #555"></div>
<div class="t" style="left:1441px;top:1376.0px;font-size:20px;line-height:24.0px;color:#000;font-weight:normal;">Offset:</div>
<div class="edit" style="left:1441px;top:1399.6px;width:220px;height:35px;"></div>
<div class="editbtn" style="left:1630px;top:1400.6px;width:30px;height:33px;"></div>
<div class="t" style="left:1448px;top:1405.1px;font-size:20px;line-height:24.0px;color:#000;font-weight:normal;">2.2 V</div>
<div class="ar" style="left:1637.5px;top:1413.9px;border-left:8px solid transparent;border-right:8px solid transparent;border-top:6.8px solid #555"></div>
<div class="t" style="left:1441px;top:1437.2px;font-size:20px;line-height:24.0px;color:#000;font-weight:normal;">Phase:</div>
<div class="edit" style="left:1441px;top:1460.8px;width:220px;height:35px;"></div>
<div class="editbtn" style="left:1630px;top:1461.8px;width:30px;height:33px;"></div>
<div class="t" style="left:1448px;top:1466.3px;font-size:20px;line-height:24.0px;color:#000;font-weight:normal;">0 °</div>
<div class="ar" style="left:1637.5px;top:1475.1px;border-left:8px solid transparent;border-right:8px solid transparent;border-top:6.8px solid #555"></div>
<div class="" style="left:1668px;top:1140px;width:732px;height:357px;background:#000"></div>
<div class="" style="left:1703px;top:1141px;width:143px;height:34px;background:#eeeeee;border:3px solid #e0141a"></div>
<div class="t" style="left:1574.0px;width:400px;text-align:center;top:1146.0px;font-size:20px;line-height:24.0px;color:#000;font-weight:bold">Ready</div>
<div class="btn" style="left:2291px;top:1141px;width:39px;height:34px;"></div>
<svg class="ic" style="left:2298.3px;top:1145.8px" width="24.5" height="24.5" viewBox="0 0 32 32"><use href="#gear"/></svg>
<div class="t" style="left:2358px;top:1146.6px;font-size:19px;line-height:22.8px;color:#fff;font-weight:normal;">V</div>
<svg style="left:0;top:0" width="2400" height="1500" viewBox="0 0 2400 1500"><path d="M1766.0 1177V1459.4M1828.4 1177V1459.4M1890.8 1177V1459.4M1953.3 1177V1459.4M2015.8 1177V1459.4M2078.2 1177V1459.4M2140.7 1177V1459.4M2203.1 1177V1459.4M2265.6 1177V1459.4M1703.5 1205.2H2328M1703.5 1233.5H2328M1703.5 1261.7H2328M1703.5 1290.0H2328M1703.5 1318.2H2328M1703.5 1346.4H2328M1703.5 1374.7H2328M1703.5 1402.9H2328M1703.5 1431.2H2328" stroke="#bdbdbd" stroke-width="1.6" stroke-dasharray="2.6 2"/><rect x="1703.5" y="1177" width="624.5" height="282.4" fill="none" stroke="#bdbdbd" stroke-width="1.6"/><path d="M1709.7 1177v4M1709.7 1459.4v-4M1716.0 1177v4M1716.0 1459.4v-4M1722.2 1177v4M1722.2 1459.4v-4M1728.5 1177v4M1728.5 1459.4v-4M1734.7 1177v8M1734.7 1459.4v-8M1741.0 1177v4M1741.0 1459.4v-4M1747.2 1177v4M1747.2 1459.4v-4M1753.5 1177v4M1753.5 1459.4v-4M1759.7 1177v4M1759.7 1459.4v-4M1772.2 1177v4M1772.2 1459.4v-4M1778.4 1177v4M1778.4 1459.4v-4M1784.7 1177v4M1784.7 1459.4v-4M1790.9 1177v4M1790.9 1459.4v-4M1797.2 1177v8M1797.2 1459.4v-8M1803.4 1177v4M1803.4 1459.4v-4M1809.7 1177v4M1809.7 1459.4v-4M1815.9 1177v4M1815.9 1459.4v-4M1822.2 1177v4M1822.2 1459.4v-4M1834.6 1177v4M1834.6 1459.4v-4M1840.9 1177v4M1840.9 1459.4v-4M1847.1 1177v4M1847.1 1459.4v-4M1853.4 1177v4M1853.4 1459.4v-4M1859.6 1177v8M1859.6 1459.4v-8M1865.9 1177v4M1865.9 1459.4v-4M1872.1 1177v4M1872.1 1459.4v-4M1878.4 1177v4M1878.4 1459.4v-4M1884.6 1177v4M1884.6 1459.4v-4M1897.1 1177v4M1897.1 1459.4v-4M1903.3 1177v4M1903.3 1459.4v-4M1909.6 1177v4M1909.6 1459.4v-4M1915.8 1177v4M1915.8 1459.4v-4M1922.1 1177v8M1922.1 1459.4v-8M1928.3 1177v4M1928.3 1459.4v-4M1934.6 1177v4M1934.6 1459.4v-4M1940.8 1177v4M1940.8 1459.4v-4M1947.1 1177v4M1947.1 1459.4v-4M1959.5 1177v4M1959.5 1459.4v-4M1965.8 1177v4M1965.8 1459.4v-4M1972.0 1177v4M1972.0 1459.4v-4M1978.3 1177v4M1978.3 1459.4v-4M1984.5 1177v8M1984.5 1459.4v-8M1990.8 1177v4M1990.8 1459.4v-4M1997.0 1177v4M1997.0 1459.4v-4M2003.3 1177v4M2003.3 1459.4v-4M2009.5 1177v4M2009.5 1459.4v-4M2022.0 1177v4M2022.0 1459.4v-4M2028.2 1177v4M2028.2 1459.4v-4M2034.5 1177v4M2034.5 1459.4v-4M2040.7 1177v4M2040.7 1459.4v-4M2047.0 1177v8M2047.0 1459.4v-8M2053.2 1177v4M2053.2 1459.4v-4M2059.5 1177v4M2059.5 1459.4v-4M2065.7 1177v4M2065.7 1459.4v-4M2072.0 1177v4M2072.0 1459.4v-4M2084.4 1177v4M2084.4 1459.4v-4M2090.7 1177v4M2090.7 1459.4v-4M2096.9 1177v4M2096.9 1459.4v-4M2103.2 1177v4M2103.2 1459.4v-4M2109.4 1177v8M2109.4 1459.4v-8M2115.7 1177v4M2115.7 1459.4v-4M2121.9 1177v4M2121.9 1459.4v-4M2128.2 1177v4M2128.2 1459.4v-4M2134.4 1177v4M2134.4 1459.4v-4M2146.9 1177v4M2146.9 1459.4v-4M2153.1 1177v4M2153.1 1459.4v-4M2159.4 1177v4M2159.4 1459.4v-4M2165.6 1177v4M2165.6 1459.4v-4M2171.9 1177v8M2171.9 1459.4v-8M2178.1 1177v4M2178.1 1459.4v-4M2184.4 1177v4M2184.4 1459.4v-4M2190.6 1177v4M2190.6 1459.4v-4M2196.9 1177v4M2196.9 1459.4v-4M2209.3 1177v4M2209.3 1459.4v-4M2215.6 1177v4M2215.6 1459.4v-4M2221.8 1177v4M2221.8 1459.4v-4M2228.1 1177v4M2228.1 1459.4v-4M2234.3 1177v8M2234.3 1459.4v-8M2240.6 1177v4M2240.6 1459.4v-4M2246.8 1177v4M2246.8 1459.4v-4M2253.1 1177v4M2253.1 1459.4v-4M2259.3 1177v4M2259.3 1459.4v-4M2271.8 1177v4M2271.8 1459.4v-4M2278.0 1177v4M2278.0 1459.4v-4M2284.3 1177v4M2284.3 1459.4v-4M2290.5 1177v4M2290.5 1459.4v-4M2296.8 1177v8M2296.8 1459.4v-8M2303.0 1177v4M2303.0 1459.4v-4M2309.3 1177v4M2309.3 1459.4v-4M2315.5 1177v4M2315.5 1459.4v-4M2321.8 1177v4M2321.8 1459.4v-4M2328 1179.8h-3M2328 1182.6h-3M2328 1185.5h-3M2328 1188.3h-3M2328 1191.1h-6M2328 1193.9h-3M2328 1196.8h-3M2328 1199.6h-3M2328 1202.4h-3M2328 1208.1h-3M2328 1210.9h-3M2328 1213.7h-3M2328 1216.5h-3M2328 1219.4h-6M2328 1222.2h-3M2328 1225.0h-3M2328 1227.8h-3M2328 1230.7h-3M2328 1236.3h-3M2328 1239.1h-3M2328 1242.0h-3M2328 1244.8h-3M2328 1247.6h-6M2328 1250.4h-3M2328 1253.2h-3M2328 1256.1h-3M2328 1258.9h-3M2328 1264.5h-3M2328 1267.4h-3M2328 1270.2h-3M2328 1273.0h-3M2328 1275.8h-6M2328 1278.7h-3M2328 1281.5h-3M2328 1284.3h-3M2328 1287.1h-3M2328 1292.8h-3M2328 1295.6h-3M2328 1298.4h-3M2328 1301.3h-3M2328 1304.1h-6M2328 1306.9h-3M2328 1309.7h-3M2328 1312.6h-3M2328 1315.4h-3M2328 1321.0h-3M2328 1323.8h-3M2328 1326.7h-3M2328 1329.5h-3M2328 1332.3h-6M2328 1335.1h-3M2328 1338.0h-3M2328 1340.8h-3M2328 1343.6h-3M2328 1349.3h-3M2328 1352.1h-3M2328 1354.9h-3M2328 1357.7h-3M2328 1360.6h-6M2328 1363.4h-3M2328 1366.2h-3M2328 1369.0h-3M2328 1371.9h-3M2328 1377.5h-3M2328 1380.3h-3M2328 1383.2h-3M2328 1386.0h-3M2328 1388.8h-6M2328 1391.6h-3M2328 1394.4h-3M2328 1397.3h-3M2328 1400.1h-3M2328 1405.7h-3M2328 1408.6h-3M2328 1411.4h-3M2328 1414.2h-3M2328 1417.0h-6M2328 1419.9h-3M2328 1422.7h-3M2328 1425.5h-3M2328 1428.3h-3M2328 1434.0h-3M2328 1436.8h-3M2328 1439.6h-3M2328 1442.5h-3M2328 1445.3h-6M2328 1448.1h-3M2328 1450.9h-3M2328 1453.8h-3M2328 1456.6h-3" stroke="#bdbdbd" stroke-width="1.5"/><path d="M1703.5 1321 H1754.5 V1294.2 H1806.9 V1264.7 H1859 V1235.8 H1910.9 V1208 H1962.9 V1178.6 H2014.6 V1321 H2066.9 V1294.2 H2118.6 V1264.7 H2170.3 V1235.8 H2223.6 V1208 H2275.9 V1178.6 H2328" fill="none" stroke="#e4e47a" stroke-width="1.8"/></svg>
<div class="t" style="left:2333px;top:1175.0px;font-size:20px;line-height:24.0px;color:#fff;font-weight:normal;">2.7</div>
<div class="t" style="left:2333px;top:1201.2px;font-size:20px;line-height:24.0px;color:#fff;font-weight:normal;">2.6</div>
<div class="t" style="left:2333px;top:1227.4px;font-size:20px;line-height:24.0px;color:#fff;font-weight:normal;">2.5</div>
<div class="t" style="left:2333px;top:1253.6px;font-size:20px;line-height:24.0px;color:#fff;font-weight:normal;">2.4</div>
<div class="t" style="left:2333px;top:1279.8px;font-size:20px;line-height:24.0px;color:#fff;font-weight:normal;">2.3</div>
<div class="t" style="left:2333px;top:1306.0px;font-size:20px;line-height:24.0px;color:#fff;font-weight:normal;">2.2</div>
<div class="t" style="left:2333px;top:1332.2px;font-size:20px;line-height:24.0px;color:#fff;font-weight:normal;">2.1</div>
<div class="t" style="left:2333px;top:1358.4px;font-size:20px;line-height:24.0px;color:#fff;font-weight:normal;">2</div>
<div class="t" style="left:2333px;top:1384.6px;font-size:20px;line-height:24.0px;color:#fff;font-weight:normal;">1.9</div>
<div class="t" style="left:2333px;top:1410.8px;font-size:20px;line-height:24.0px;color:#fff;font-weight:normal;">1.8</div>
<div class="t" style="left:2333px;top:1437.0px;font-size:20px;line-height:24.0px;color:#fff;font-weight:normal;">1.7</div>
<div class="t" style="left:1508.0px;width:400px;text-align:center;top:1468.0px;font-size:20px;line-height:24.0px;color:#fff;font-weight:normal">0 ms</div>
<div class="t" style="left:1634.4px;width:400px;text-align:center;top:1468.0px;font-size:20px;line-height:24.0px;color:#fff;font-weight:normal">10 ms</div>
<div class="t" style="left:1760.8px;width:400px;text-align:center;top:1468.0px;font-size:20px;line-height:24.0px;color:#fff;font-weight:normal">20 ms</div>
<div class="t" style="left:1887.1999999999998px;width:400px;text-align:center;top:1468.0px;font-size:20px;line-height:24.0px;color:#fff;font-weight:normal">30 ms</div>
<div class="t" style="left:2013.6px;width:400px;text-align:center;top:1468.0px;font-size:20px;line-height:24.0px;color:#fff;font-weight:normal">40 ms</div>
<div class="t" style="left:2140.0px;width:400px;text-align:center;top:1468.0px;font-size:20px;line-height:24.0px;color:#fff;font-weight:normal">50 ms</div>
<div class="" style="left:0px;top:1497px;width:2400px;height:42px;background:#ececec;border-top:1.5px solid #c8c8c8"></div>
<div class="btn" style="left:0px;top:1506px;width:130px;height:28px;"></div>
<div class="t" style="left:-135.0px;width:400px;text-align:center;top:1510.4px;font-size:16px;line-height:19.2px;color:#000;font-weight:normal">Manual Trigger</div>
<div class="btn" style="left:1919px;top:1507px;width:248px;height:27px;"></div>
<div class="t" style="left:1843.0px;width:400px;text-align:center;top:1510.9px;font-size:16px;line-height:19.2px;color:#000;font-weight:normal">Discovery2 SN:210321A8068C</div>
<div class="btn" style="left:2177px;top:1507px;width:143px;height:27px;"></div>
<div class="t" style="left:2048.5px;width:400px;text-align:center;top:1510.9px;font-size:16px;line-height:19.2px;color:#000;font-weight:normal">Status: OK</div>
<div class="btn" style="left:2331px;top:1507px;width:38px;height:27px;"></div>
<svg class="ic" style="left:2340.3px;top:1510.8px" width="19.4" height="19.4" viewBox="0 0 32 32"><use href="#gear"/></svg></body></html>
